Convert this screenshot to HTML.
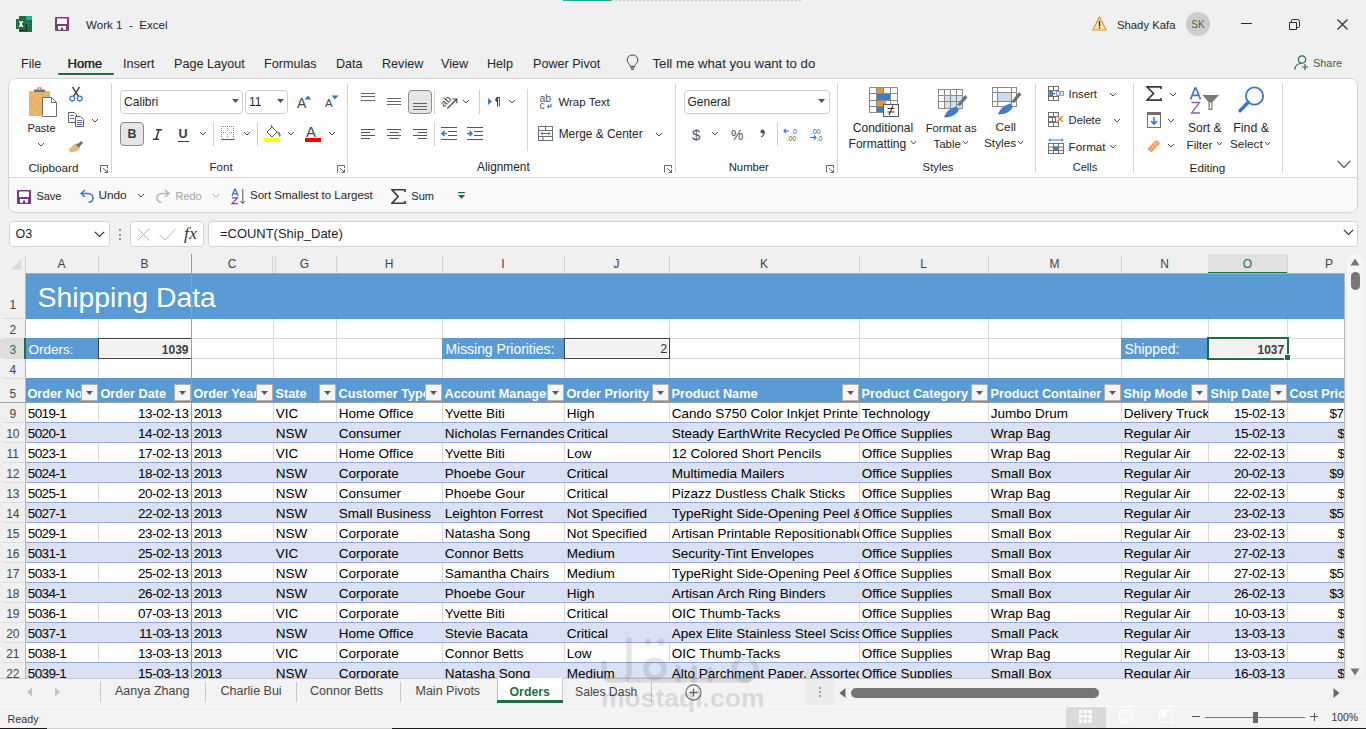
<!DOCTYPE html><html><head><meta charset="utf-8"><style>
html,body{margin:0;padding:0;}
body{width:1366px;height:729px;overflow:hidden;position:relative;background:#f0f0f0;font-family:"Liberation Sans",sans-serif;}
.a{position:absolute;}
.t{position:absolute;white-space:pre;line-height:1;}
.clip{position:absolute;overflow:hidden;}
</style></head><body>
<div class="a" style="left:563px;top:0px;width:48px;height:1px;background:#1aa99b"></div>
<div class="a" style="left:611px;top:0px;width:192px;height:1px;background:repeating-linear-gradient(90deg,#c8c8c8 0 2px,transparent 2px 4px)"></div>
<svg class="a" style="left:16px;top:16px;" width="16" height="16" viewBox="0 0 16 16"><rect x="3" y="0" width="13" height="16" fill="#1d7044"/><rect x="10" y="0" width="6" height="4" fill="#20b1a3"/><rect x="0" y="3" width="10" height="10" fill="#1d7044"/><path d="M2.6 5 L4.2 5 L5 6.6 L5.8 5 L7.4 5 L5.9 8 L7.4 11 L5.8 11 L5 9.4 L4.2 11 L2.6 11 L4.1 8 Z" fill="#fff"/><path d="M10.5 8 V14.5 H3.5" fill="none" stroke="#222" stroke-width="1"/><g fill="#20b1a3"><rect x="11" y="6" width="1" height="1"/><rect x="13" y="7" width="1" height="1"/><rect x="12" y="9" width="1" height="1"/></g></svg>
<svg class="a" style="left:55px;top:17px;" width="14" height="14" viewBox="0 0 14 14"><rect x="0" y="0" width="14" height="14" rx="1" fill="#7b3a80"/><rect x="2" y="1.5" width="10" height="5.5" fill="#fff"/><rect x="3" y="9" width="8" height="3.7" fill="#fff"/><rect x="6" y="10.5" width="2" height="3" fill="#7b3a80"/></svg>
<div class="t " style="left:86px;top:19.18px;font-size:11.6px;color:#262626;">Work 1  -  Excel</div>
<svg class="a" style="left:1092px;top:16px;" width="15" height="15" viewBox="0 0 15 15"><path d="M7.5 1 L14.2 14 H0.8 Z" fill="#fde7b8" stroke="#e0932a" stroke-width="1.2" stroke-linejoin="round"/><rect x="6.9" y="5" width="1.3" height="5.2" fill="#222"/><rect x="6.9" y="11.2" width="1.3" height="1.4" fill="#222"/></svg>
<div class="t " style="left:1117px;top:19.73px;font-size:11.3px;color:#262626;">Shady Kafa</div>
<div class="a" style="left:1186px;top:12px;width:24px;height:24px;border-radius:50%;background:#cdcdcd"></div>
<div class="t" style="left:1098px;width:200px;text-align:center;top:19.54px;font-size:10px;color:#5a5a5a;">SK</div>
<div class="a" style="left:1241px;top:23px;width:11px;height:1px;background:#2a2a2a"></div>
<svg class="a" style="left:1289px;top:19px;" width="11" height="11" viewBox="0 0 11 11"><path d="M0.5 3.5 H7.5 V10.5 H0.5 Z" fill="none" stroke="#2a2a2a" stroke-width="1"/><path d="M2.5 3.5 V1.5 Q2.5 0.5 3.5 0.5 H8.5 Q10.5 0.5 10.5 2.5 V7.5 Q10.5 8.5 9.5 8.5 H7.5" fill="none" stroke="#2a2a2a" stroke-width="1"/></svg>
<svg class="a" style="left:1337px;top:19px;" width="11" height="11" viewBox="0 0 11 11"><path d="M0.5 0.5 L10.5 10.5 M10.5 0.5 L0.5 10.5" stroke="#2a2a2a" stroke-width="1.1"/></svg>
<div class="t " style="left:21px;top:58.13px;font-size:12.6px;color:#262626;">File</div>
<div class="t " style="left:123px;top:58.13px;font-size:12.6px;color:#262626;">Insert</div>
<div class="t " style="left:174px;top:58.13px;font-size:12.6px;color:#262626;">Page Layout</div>
<div class="t " style="left:264px;top:58.13px;font-size:12.6px;color:#262626;">Formulas</div>
<div class="t " style="left:336px;top:58.13px;font-size:12.6px;color:#262626;">Data</div>
<div class="t " style="left:382px;top:58.13px;font-size:12.6px;color:#262626;">Review</div>
<div class="t " style="left:441px;top:58.13px;font-size:12.6px;color:#262626;">View</div>
<div class="t " style="left:487px;top:58.13px;font-size:12.6px;color:#262626;">Help</div>
<div class="t " style="left:533px;top:58.13px;font-size:12.6px;color:#262626;">Power Pivot</div>
<div class="t " style="left:67.5px;top:57.88px;font-size:12.9px;color:#262626;text-shadow:0.35px 0 0 #262626;">Home</div>
<div class="a" style="left:58px;top:73px;width:56px;height:2.4px;background:#1e6e42;border-radius:1px"></div>
<svg class="a" style="left:626px;top:54px;" width="13" height="16" viewBox="0 0 13 16"><path d="M6.5 1 C3.2 1 1.2 3.4 1.2 6 C1.2 8 2.4 9.2 3.4 10.3 C4 11 4.2 11.6 4.2 12.3 H8.8 C8.8 11.6 9 11 9.6 10.3 C10.6 9.2 11.8 8 11.8 6 C11.8 3.4 9.8 1 6.5 1 Z" fill="none" stroke="#444" stroke-width="1"/><path d="M4.4 13.8 H8.6 M5 15.3 H8" stroke="#444" stroke-width="1"/></svg>
<div class="t " style="left:652.5px;top:57.33px;font-size:13.2px;color:#262626;">Tell me what you want to do</div>
<svg class="a" style="left:1294px;top:55px;" width="15" height="15" viewBox="0 0 15 15"><circle cx="8" cy="4.5" r="3.7" fill="none" stroke="#1e6e42" stroke-width="1.2"/><path d="M0.8 14.5 C1.2 10.5 4 8.5 7.5 8.5" fill="none" stroke="#1e6e42" stroke-width="1.2"/><path d="M11 9 V15 M8 12 H14" stroke="#1e6e42" stroke-width="1.2"/></svg>
<div class="t " style="left:1313px;top:57.77px;font-size:10.9px;color:#1e6e42;">Share</div>
<div class="a" style="left:8px;top:78px;width:1348px;height:133px;border:1px solid #d5d5d5;border-radius:8px;background:#f9f9f9;overflow:hidden"><div class="a" style="left:0;top:0;width:1348px;height:98px;background:#fff;border-bottom:1px solid #d5d5d5"></div></div>
<svg class="a" style="left:29px;top:87px;" width="29" height="31" viewBox="0 0 29 31"><rect x="0" y="4" width="21" height="25" rx="1.5" fill="#e7b263"/>
<g fill="#f6d59d" opacity="0.9"><circle cx="3" cy="8" r="0.8"/><circle cx="7" cy="11" r="0.8"/><circle cx="4" cy="15" r="0.8"/><circle cx="8" cy="19" r="0.8"/><circle cx="3" cy="23" r="0.8"/><circle cx="7" cy="26" r="0.8"/><circle cx="11" cy="9" r="0.8"/><circle cx="16" cy="7" r="0.8"/></g>
<path d="M5 5 H16 V2.5 H12.5 V0.5 H8.5 V2.5 H5 Z" fill="#737373"/><rect x="9.5" y="1.3" width="2" height="1.4" fill="#fff"/>
<path d="M13.5 10.5 H22.5 L27.5 15.5 V29.5 H13.5 Z" fill="#fff" stroke="#6d6d6d" stroke-width="1"/><path d="M22.5 10.5 V15.5 H27.5" fill="none" stroke="#6d6d6d" stroke-width="1"/></svg>
<div class="t " style="left:27.4px;top:123.29px;font-size:11px;color:#262626;">Paste</div>
<svg class="a" style="left:37px;top:142px;" width="8" height="5" viewBox="0 0 8 5"><path d="M1 1 L4.0 4 L7 1" fill="none" stroke="#4a4a4a" stroke-width="1"/></svg>
<svg class="a" style="left:69px;top:86px;" width="15" height="16" viewBox="0 0 15 16"><path d="M3.5 1 L9.5 10.5 M10.5 1 L4.5 10.5" stroke="#505050" stroke-width="1.5"/><circle cx="3.3" cy="12.6" r="2.4" fill="none" stroke="#3b78c4" stroke-width="1.3"/><circle cx="10.7" cy="12.6" r="2.4" fill="none" stroke="#3b78c4" stroke-width="1.3"/></svg>
<svg class="a" style="left:68px;top:112px;" width="16" height="15" viewBox="0 0 16 15"><path d="M0.5 0.5 H6.5 L8.5 2.5 V10.5 H0.5 Z" fill="#fff" stroke="#606060"/><rect x="2" y="3" width="4" height="1" fill="#3b78c4"/><rect x="2" y="6" width="4" height="1" fill="#3b78c4"/><path d="M7.5 4.5 H12.5 L15.5 7.5 V14.5 H7.5 Z" fill="#fff" stroke="#606060"/><rect x="9" y="8" width="5" height="1" fill="#3b78c4"/><rect x="9" y="10" width="5" height="1" fill="#3b78c4"/><rect x="9" y="12" width="5" height="1" fill="#3b78c4"/></svg>
<svg class="a" style="left:91px;top:118px;" width="8" height="5" viewBox="0 0 8 5"><path d="M1 1 L4.0 4 L7 1" fill="none" stroke="#4a4a4a" stroke-width="1"/></svg>
<svg class="a" style="left:68px;top:139px;" width="16" height="14" viewBox="0 0 16 14"><path d="M9.5 5.5 L13 2 L15 4 L11.5 7.5 Z" fill="#6b6b6b"/><path d="M7 4.5 L12 9.5 L9.5 12 L3 13.5 L0.5 11 L2.5 9 Z" fill="#e3b67a"/><path d="M8.5 5 L11.5 8" stroke="#737373" stroke-width="2"/></svg>
<div class="t " style="left:28.4px;top:161.60px;font-size:11.7px;color:#262626;">Clipboard</div>
<svg class="a" style="left:100px;top:165px;" width="8" height="8" viewBox="0 0 8 8"><path d="M0.5 7.5 V0.5 H7.5 V3" fill="none" stroke="#666" stroke-width="1"/><path d="M3 3 L7.5 7.5 M7.5 4.5 V7.5 H4.5" fill="none" stroke="#666" stroke-width="1"/></svg>
<div class="a" style="left:111px;top:83px;width:1px;height:90px;background:#d6d6d6"></div>
<div class="a" style="left:120px;top:90px;width:121px;height:22px;border:1px solid #cfcfcf;border-radius:4px;background:#fff"></div>
<div class="t " style="left:124px;top:95.76px;font-size:12.1px;color:#1f1f1f;">Calibri</div>
<svg class="a" style="left:232px;top:99px;" width="7" height="4" viewBox="0 0 7 4"><path d="M0 0 H7 L3.5 4 Z" fill="#555"/></svg>
<div class="a" style="left:245px;top:90px;width:41px;height:22px;border:1px solid #cfcfcf;border-radius:4px;background:#fff"></div>
<div class="t " style="left:249px;top:95.76px;font-size:12.1px;color:#1f1f1f;">11</div>
<svg class="a" style="left:277px;top:99px;" width="7" height="4" viewBox="0 0 7 4"><path d="M0 0 H7 L3.5 4 Z" fill="#555"/></svg>
<div class="t " style="left:297px;top:96.15px;font-size:14px;color:#444;">A</div>
<svg class="a" style="left:304px;top:95px;" width="8" height="5" viewBox="0 0 8 5"><path d="M0.5 4.5 L4 0.5 L7.5 4.5 Z" fill="#3b78c4"/></svg>
<div class="t " style="left:325px;top:98.27px;font-size:11.5px;color:#444;">A</div>
<svg class="a" style="left:331px;top:95px;" width="8" height="5" viewBox="0 0 8 5"><path d="M0.5 0.5 H7.5 L4 4.5 Z" fill="#3b78c4"/></svg>
<div class="a" style="left:120px;top:122px;width:22px;height:22px;border:1px solid #8c8c8c;border-radius:4px;background:#e6e6e6"></div>
<div class="t " style="left:127.5px;top:127.92px;font-size:12.5px;color:#3a3a3a;font-weight:700;">B</div>
<svg class="a" style="left:152px;top:129px;" width="11" height="11" viewBox="0 0 11 11"><path d="M4 0.8 H10 M1 10.2 H7 M7 0.8 L4 10.2" stroke="#3a3a3a" stroke-width="1.5" fill="none"/></svg>
<div class="t " style="left:178.5px;top:127.92px;font-size:12.5px;color:#3a3a3a;font-weight:700;">U</div>
<div class="a" style="left:178px;top:141px;width:11px;height:1px;background:#3a3a3a"></div>
<svg class="a" style="left:199px;top:131px;" width="8" height="5" viewBox="0 0 8 5"><path d="M1 1 L4.0 4 L7 1" fill="none" stroke="#4a4a4a" stroke-width="1"/></svg>
<div class="a" style="left:213px;top:122px;width:1px;height:24px;background:#d0d0d0"></div>
<svg class="a" style="left:221px;top:126px;" width="14" height="15" viewBox="0 0 14 15"><g fill="#8a8a8a"><rect x="0" y="0" width="1" height="1"/><rect x="2" y="0" width="1" height="1"/><rect x="4" y="0" width="1" height="1"/><rect x="6" y="0" width="1" height="1"/><rect x="8" y="0" width="1" height="1"/><rect x="10" y="0" width="1" height="1"/><rect x="12" y="0" width="1" height="1"/><rect x="0" y="6" width="1" height="1"/><rect x="2" y="6" width="1" height="1"/><rect x="4" y="6" width="1" height="1"/><rect x="8" y="6" width="1" height="1"/><rect x="10" y="6" width="1" height="1"/><rect x="12" y="6" width="1" height="1"/><rect x="0" y="2" width="1" height="1"/><rect x="0" y="4" width="1" height="1"/><rect x="0" y="8" width="1" height="1"/><rect x="0" y="10" width="1" height="1"/><rect x="12" y="2" width="1" height="1"/><rect x="12" y="4" width="1" height="1"/><rect x="12" y="8" width="1" height="1"/><rect x="12" y="10" width="1" height="1"/><rect x="6" y="2" width="1" height="1"/><rect x="6" y="4" width="1" height="1"/><rect x="6" y="8" width="1" height="1"/><rect x="6" y="10" width="1" height="1"/></g><rect x="0" y="13" width="14" height="1" fill="#555"/></svg>
<svg class="a" style="left:243px;top:131px;" width="8" height="5" viewBox="0 0 8 5"><path d="M1 1 L4.0 4 L7 1" fill="none" stroke="#4a4a4a" stroke-width="1"/></svg>
<div class="a" style="left:257px;top:122px;width:1px;height:24px;background:#d0d0d0"></div>
<svg class="a" style="left:264px;top:124px;" width="17" height="18" viewBox="0 0 17 18"><path d="M3 8 L8 3 L13 8 L8 13 Z" fill="#fff" stroke="#555" stroke-width="1"/><path d="M7.5 1 L8 3" stroke="#555"/><path d="M13.5 8 C15.5 9 16 11 15.5 12.5" fill="none" stroke="#3b78c4" stroke-width="1.6"/><rect x="0" y="14" width="16" height="4" fill="#ffff00"/></svg>
<svg class="a" style="left:287px;top:131px;" width="8" height="5" viewBox="0 0 8 5"><path d="M1 1 L4.0 4 L7 1" fill="none" stroke="#4a4a4a" stroke-width="1"/></svg>
<div class="t " style="left:306px;top:124.30px;font-size:15px;color:#444;">A</div>
<div class="a" style="left:305px;top:138px;width:16px;height:4px;background:#ff0000"></div>
<svg class="a" style="left:328px;top:131px;" width="8" height="5" viewBox="0 0 8 5"><path d="M1 1 L4.0 4 L7 1" fill="none" stroke="#4a4a4a" stroke-width="1"/></svg>
<div class="t " style="left:209.6px;top:161.97px;font-size:11.5px;color:#262626;">Font</div>
<svg class="a" style="left:337px;top:165px;" width="8" height="8" viewBox="0 0 8 8"><path d="M0.5 7.5 V0.5 H7.5 V3" fill="none" stroke="#666" stroke-width="1"/><path d="M3 3 L7.5 7.5 M7.5 4.5 V7.5 H4.5" fill="none" stroke="#666" stroke-width="1"/></svg>
<div class="a" style="left:347px;top:83px;width:1px;height:90px;background:#d6d6d6"></div>
<svg class="a" style="left:361px;top:93px;" width="14" height="9" viewBox="0 0 14 9"><rect x="0" y="0" width="14" height="1" fill="#666"/><rect x="0" y="3" width="14" height="1" fill="#666"/><rect x="0" y="7" width="14" height="1" fill="#666"/></svg>
<svg class="a" style="left:387px;top:97px;" width="14" height="9" viewBox="0 0 14 9"><rect x="0" y="1" width="14" height="1" fill="#666"/><rect x="0" y="4" width="14" height="1" fill="#666"/><rect x="0" y="7" width="14" height="1" fill="#666"/></svg>
<div class="a" style="left:408px;top:90px;width:22px;height:22px;border:1px solid #8c8c8c;border-radius:4px;background:#e6e6e6"></div>
<svg class="a" style="left:413px;top:102px;" width="14" height="9" viewBox="0 0 14 9"><rect x="0" y="1" width="14" height="1" fill="#666"/><rect x="0" y="4" width="14" height="1" fill="#666"/><rect x="0" y="7" width="14" height="1" fill="#666"/></svg>
<div class="a" style="left:434px;top:90px;width:1px;height:24px;background:#d0d0d0"></div>
<svg class="a" style="left:439px;top:91px;" width="20" height="20" viewBox="0 0 20 20"><text x="5" y="16.5" transform="rotate(-45 5 16.5)" font-family="Liberation Sans" font-size="10" fill="#444">ab</text><path d="M8.3 17.5 L17.8 8" stroke="#444" stroke-width="1.1"/><path d="M13.5 8 H17.8 V12.3" fill="none" stroke="#444" stroke-width="1.1"/></svg>
<svg class="a" style="left:462px;top:99px;" width="8" height="5" viewBox="0 0 8 5"><path d="M1 1 L4.0 4 L7 1" fill="none" stroke="#4a4a4a" stroke-width="1"/></svg>
<div class="a" style="left:479px;top:90px;width:1px;height:24px;background:#d0d0d0"></div>
<svg class="a" style="left:487px;top:97px;" width="14" height="10" viewBox="0 0 14 10"><path d="M1 1 L5 4.5 L1 8 Z" fill="#3b78c4"/><path d="M9.5 0.5 H13 M10.5 0.5 V9.5 M12.3 0.5 V9.5" stroke="#444" stroke-width="1"/><path d="M10.5 0.5 A2.3 2.3 0 0 0 10.5 5.1 Z" fill="#444"/></svg>
<svg class="a" style="left:508px;top:99px;" width="8" height="5" viewBox="0 0 8 5"><path d="M1 1 L4.0 4 L7 1" fill="none" stroke="#4a4a4a" stroke-width="1"/></svg>
<svg class="a" style="left:361px;top:129px;" width="14" height="10" viewBox="0 0 14 10"><rect x="0" y="0" width="14" height="1" fill="#555"/><rect x="0" y="3" width="9" height="1" fill="#555"/><rect x="0" y="6" width="14" height="1" fill="#555"/><rect x="0" y="9" width="9" height="1" fill="#555"/></svg>
<svg class="a" style="left:387px;top:129px;" width="14" height="10" viewBox="0 0 14 10"><rect x="0.0" y="0" width="14" height="1" fill="#555"/><rect x="2.5" y="3" width="9" height="1" fill="#555"/><rect x="0.0" y="6" width="14" height="1" fill="#555"/><rect x="2.5" y="9" width="9" height="1" fill="#555"/></svg>
<svg class="a" style="left:413px;top:129px;" width="14" height="10" viewBox="0 0 14 10"><rect x="0" y="0" width="14" height="1" fill="#555"/><rect x="5" y="3" width="9" height="1" fill="#555"/><rect x="0" y="6" width="14" height="1" fill="#555"/><rect x="5" y="9" width="9" height="1" fill="#555"/></svg>
<div class="a" style="left:434px;top:122px;width:1px;height:24px;background:#d0d0d0"></div>
<svg class="a" style="left:441px;top:127px;" width="16" height="13" viewBox="0 0 16 13"><rect x="0" y="0" width="16" height="1" fill="#555"/><rect x="7" y="4" width="9" height="1" fill="#555"/><rect x="7" y="8" width="9" height="1" fill="#555"/><rect x="0" y="12" width="16" height="1" fill="#555"/><path d="M6 6.5 H1 M3.5 4 L1 6.5 L3.5 9" fill="none" stroke="#3b78c4" stroke-width="1.5"/></svg>
<svg class="a" style="left:467px;top:127px;" width="16" height="13" viewBox="0 0 16 13"><rect x="0" y="0" width="16" height="1" fill="#555"/><rect x="7" y="4" width="9" height="1" fill="#555"/><rect x="7" y="8" width="9" height="1" fill="#555"/><rect x="0" y="12" width="16" height="1" fill="#555"/><path d="M0 6.5 H5 M2.5 4 L5 6.5 L2.5 9" fill="none" stroke="#3b78c4" stroke-width="1.5"/></svg>
<div class="a" style="left:527px;top:89px;width:1px;height:62px;background:#d6d6d6"></div>
<svg class="a" style="left:539px;top:93px;" width="15" height="17" viewBox="0 0 15 17"><text x="0.5" y="9" font-family="Liberation Sans" font-size="10.5" fill="#555">ab</text><text x="0.5" y="16" font-family="Liberation Sans" font-size="10.5" fill="#555">c</text><path d="M12 11 V13.5 H8.5 M10 12 L8.5 13.5 L10 15" fill="none" stroke="#3b78c4" stroke-width="1.1"/></svg>
<div class="t " style="left:558.4px;top:96.97px;font-size:11.5px;color:#262626;">Wrap Text</div>
<svg class="a" style="left:538px;top:126px;" width="15" height="15" viewBox="0 0 15 15"><rect x="0.5" y="0.5" width="14" height="14" fill="#fff" stroke="#6d6d6d"/><path d="M0.5 4.5 H14.5 M0.5 10.5 H14.5 M7.5 0.5 V4.5 M5 10.5 V14.5" stroke="#6d6d6d"/><path d="M3 7.5 H12 M4.5 6 L3 7.5 L4.5 9 M10.5 6 L12 7.5 L10.5 9" fill="none" stroke="#3b78c4"/></svg>
<div class="t " style="left:558.7px;top:128.93px;font-size:11.9px;color:#262626;">Merge &amp; Center</div>
<svg class="a" style="left:655px;top:132px;" width="8" height="5" viewBox="0 0 8 5"><path d="M1 1 L4.0 4 L7 1" fill="none" stroke="#4a4a4a" stroke-width="1"/></svg>
<div class="t " style="left:477px;top:161.67px;font-size:11.85px;color:#262626;">Alignment</div>
<svg class="a" style="left:664px;top:165px;" width="8" height="8" viewBox="0 0 8 8"><path d="M0.5 7.5 V0.5 H7.5 V3" fill="none" stroke="#666" stroke-width="1"/><path d="M3 3 L7.5 7.5 M7.5 4.5 V7.5 H4.5" fill="none" stroke="#666" stroke-width="1"/></svg>
<div class="a" style="left:675px;top:83px;width:1px;height:90px;background:#d6d6d6"></div>
<div class="a" style="left:684px;top:90px;width:144px;height:22px;border:1px solid #cfcfcf;border-radius:4px;background:#fff"></div>
<div class="t " style="left:687.5px;top:95.64px;font-size:12px;color:#1f1f1f;">General</div>
<svg class="a" style="left:818px;top:99px;" width="7" height="4" viewBox="0 0 7 4"><path d="M0 0 H7 L3.5 4 Z" fill="#555"/></svg>
<div class="t " style="left:692px;top:126.80px;font-size:15px;color:#555;">$</div>
<svg class="a" style="left:711px;top:131px;" width="8" height="5" viewBox="0 0 8 5"><path d="M1 1 L4.0 4 L7 1" fill="none" stroke="#4a4a4a" stroke-width="1"/></svg>
<div class="t " style="left:731px;top:127.65px;font-size:14px;color:#555;">%</div>
<svg class="a" style="left:759px;top:129px;" width="7" height="9" viewBox="0 0 7 9"><circle cx="3.5" cy="2.6" r="2.1" fill="#555"/><path d="M5.3 2.8 Q5.4 6.2 2.2 8" stroke="#555" stroke-width="1.3" fill="none"/></svg>
<div class="a" style="left:777px;top:122px;width:1px;height:24px;background:#d0d0d0"></div>
<svg class="a" style="left:783px;top:127px;" width="16" height="14" viewBox="0 0 16 14"><path d="M1 4 H6 M3 2 L1 4 L3 6" fill="none" stroke="#3b78c4" stroke-width="1.2"/><text x="8" y="7" font-family="Liberation Sans" font-size="7" fill="#555">.0</text><text x="3.5" y="13.5" font-family="Liberation Sans" font-size="7" fill="#555">.00</text></svg>
<svg class="a" style="left:810px;top:127px;" width="16" height="14" viewBox="0 0 16 14"><text x="1" y="7" font-family="Liberation Sans" font-size="7" fill="#555">.00</text><path d="M0 10.5 H6 M4 8.5 L6 10.5 L4 12.5" fill="none" stroke="#3b78c4" stroke-width="1.2"/><text x="6.5" y="13.5" font-family="Liberation Sans" font-size="7" fill="#555">.0</text></svg>
<div class="t " style="left:728.7px;top:162.03px;font-size:11.3px;color:#262626;">Number</div>
<svg class="a" style="left:826px;top:165px;" width="8" height="8" viewBox="0 0 8 8"><path d="M0.5 7.5 V0.5 H7.5 V3" fill="none" stroke="#666" stroke-width="1"/><path d="M3 3 L7.5 7.5 M7.5 4.5 V7.5 H4.5" fill="none" stroke="#666" stroke-width="1"/></svg>
<div class="a" style="left:837px;top:83px;width:1px;height:90px;background:#d6d6d6"></div>
<svg class="a" style="left:869px;top:87px;" width="31" height="31" viewBox="0 0 31 31"><g stroke="#8a8a8a" fill="none" stroke-width="1"><path d="M0.5 0.5 H28.5 V20 M0.5 0.5 V25.5 H14 M0.5 6.5 H28.5 M0.5 13.5 H28.5 M0.5 19.5 H14 M7.5 0.5 V25.5 M14.5 0.5 V25.5 M21.5 0.5 V20"/></g>
<rect x="8" y="1" width="6" height="5" fill="#e0963e"/><rect x="8" y="7" width="13" height="6" fill="#3d7fc6"/><rect x="8" y="14" width="9" height="5" fill="#e0963e"/><rect x="8" y="20" width="6" height="5" fill="#3d7fc6"/>
<rect x="14.5" y="17.5" width="15" height="12" fill="#fff" stroke="#555"/><path d="M18.5 21.5 H25.5 M18.5 25 H25.5 M24 18.5 L20 28" stroke="#333" stroke-width="1.1" fill="none"/></svg>
<div class="t " style="left:852.7px;top:122.06px;font-size:12.1px;color:#262626;">Conditional</div>
<div class="t " style="left:848.5px;top:138.16px;font-size:12.1px;color:#262626;">Formatting</div>
<svg class="a" style="left:910px;top:140px;" width="7" height="5" viewBox="0 0 7 5"><path d="M1 1 L3.5 4 L6 1" fill="none" stroke="#4a4a4a" stroke-width="1"/></svg>
<svg class="a" style="left:938px;top:89px;" width="30" height="29" viewBox="0 0 30 29"><rect x="0.5" y="0.5" width="24" height="19" fill="#fff" stroke="#8a8a8a"/><rect x="7" y="6" width="17" height="13" fill="#cfe1f2"/><g stroke="#8a8a8a"><path d="M0.5 6.5 H24.5 M0.5 12.5 H24.5 M6.5 0.5 V19.5 M12.5 0.5 V19.5 M18.5 0.5 V19.5"/></g>
<path d="M19 16 L27 6 L29.5 8.5 L22 17 Z" fill="#707070"/><path d="M6 28.5 C8 22 13 19 18 17.5 L21 20.5 C19 25 14 28.5 6 28.5 Z" fill="#3d7fc6"/></svg>
<div class="t " style="left:925.7px;top:122.73px;font-size:11.3px;color:#262626;">Format as</div>
<div class="t " style="left:933.4px;top:138.67px;font-size:11.5px;color:#262626;">Table</div>
<svg class="a" style="left:962px;top:140px;" width="7" height="5" viewBox="0 0 7 5"><path d="M1 1 L3.5 4 L6 1" fill="none" stroke="#4a4a4a" stroke-width="1"/></svg>
<svg class="a" style="left:992px;top:87px;" width="30" height="29" viewBox="0 0 30 29"><rect x="0.5" y="0.5" width="24" height="19" fill="#fff" stroke="#8a8a8a"/><g stroke="#8a8a8a"><path d="M0.5 5.5 H24.5 M0.5 14.5 H24.5 M5.5 0.5 V19.5 M19.5 0.5 V19.5"/></g><rect x="6" y="6" width="13" height="8" fill="#c7dcf0"/>
<path d="M19 15 L27 5 L29.5 7.5 L22 16 Z" fill="#707070"/><path d="M6 27.5 C8 21 13 18 18 16.5 L21 19.5 C19 24 14 27.5 6 27.5 Z" fill="#3d7fc6"/></svg>
<div class="t " style="left:995.6px;top:122.31px;font-size:11.8px;color:#262626;">Cell</div>
<div class="t " style="left:984px;top:138.41px;font-size:11.8px;color:#262626;">Styles</div>
<svg class="a" style="left:1017px;top:140px;" width="7" height="5" viewBox="0 0 7 5"><path d="M1 1 L3.5 4 L6 1" fill="none" stroke="#4a4a4a" stroke-width="1"/></svg>
<div class="t " style="left:922.6px;top:162.23px;font-size:11.3px;color:#262626;">Styles</div>
<div class="a" style="left:1035px;top:83px;width:1px;height:90px;background:#d6d6d6"></div>
<svg class="a" style="left:1048px;top:86px;" width="16" height="16" viewBox="0 0 16 16"><g fill="#fff" stroke="#707070"><rect x="0.5" y="0.5" width="5" height="4"/><rect x="5.5" y="0.5" width="5" height="4"/><rect x="0.5" y="10.5" width="5" height="4"/><rect x="5.5" y="10.5" width="5" height="4"/><rect x="0.5" y="5.5" width="4" height="4"/></g><g fill="#dde8f4" stroke="#8aa"><rect x="8.5" y="5.5" width="3.5" height="4"/><rect x="12" y="5.5" width="3.5" height="4"/></g><path d="M7 7.5 H1.5 M3.5 5.5 L1.5 7.5 L3.5 9.5" fill="none" stroke="#3b78c4" stroke-width="1.3"/></svg>
<div class="t " style="left:1068.6px;top:88.93px;font-size:11.3px;color:#262626;">Insert</div>
<svg class="a" style="left:1109px;top:92px;" width="8" height="5" viewBox="0 0 8 5"><path d="M1 1 L4.0 4 L7 1" fill="none" stroke="#4a4a4a" stroke-width="1"/></svg>
<svg class="a" style="left:1048px;top:112px;" width="16" height="16" viewBox="0 0 16 16"><g fill="#fff" stroke="#707070"><rect x="0.5" y="0.5" width="5" height="4"/><rect x="5.5" y="0.5" width="5" height="4"/><rect x="0.5" y="10.5" width="5" height="4"/><rect x="5.5" y="10.5" width="5" height="4"/><rect x="0.5" y="5.5" width="4" height="4"/><rect x="4.5" y="5.5" width="3" height="4"/></g><path d="M9 4 L15 10 M15 4 L9 10" stroke="#e0822a" stroke-width="1.4"/></svg>
<div class="t " style="left:1068.6px;top:115.12px;font-size:11.2px;color:#262626;">Delete</div>
<svg class="a" style="left:1113px;top:118px;" width="8" height="5" viewBox="0 0 8 5"><path d="M1 1 L4.0 4 L7 1" fill="none" stroke="#4a4a4a" stroke-width="1"/></svg>
<svg class="a" style="left:1048px;top:138px;" width="16" height="16" viewBox="0 0 16 16"><path d="M0.5 2 H15.5 M2 0.5 V3.5 M14 0.5 V3.5" stroke="#3b78c4"/><g fill="#fff" stroke="#707070"><rect x="0.5" y="5.5" width="15" height="10"/></g><path d="M0.5 9 H15.5 M0.5 12.5 H15.5 M5.5 5.5 V15.5 M10.5 5.5 V15.5" stroke="#707070"/><rect x="5" y="8.5" width="5" height="4" fill="#3b78c4"/></svg>
<div class="t " style="left:1068.6px;top:140.70px;font-size:11.7px;color:#262626;">Format</div>
<svg class="a" style="left:1109px;top:144px;" width="8" height="5" viewBox="0 0 8 5"><path d="M1 1 L4.0 4 L7 1" fill="none" stroke="#4a4a4a" stroke-width="1"/></svg>
<div class="t " style="left:1072.7px;top:162.20px;font-size:11.1px;color:#262626;">Cells</div>
<div class="a" style="left:1133px;top:83px;width:1px;height:90px;background:#d6d6d6"></div>
<svg class="a" style="left:1146px;top:86px;" width="16" height="15" viewBox="0 0 16 15"><path d="M15 3 V0.8 H1 L7.5 7.5 L1 14.2 H15 V12" fill="none" stroke="#3a3a3a" stroke-width="1.7" stroke-linejoin="miter"/></svg>
<svg class="a" style="left:1169px;top:92px;" width="8" height="5" viewBox="0 0 8 5"><path d="M1 1 L4.0 4 L7 1" fill="none" stroke="#4a4a4a" stroke-width="1"/></svg>
<svg class="a" style="left:1147px;top:112px;" width="14" height="16" viewBox="0 0 14 16"><rect x="0.5" y="0.5" width="13" height="15" fill="#fff" stroke="#707070"/><rect x="0.5" y="0.5" width="13" height="2.5" fill="#707070"/><path d="M7 5 V12 M4 9 L7 12 L10 9" fill="none" stroke="#3b78c4" stroke-width="1.6"/></svg>
<svg class="a" style="left:1167px;top:118px;" width="8" height="5" viewBox="0 0 8 5"><path d="M1 1 L4.0 4 L7 1" fill="none" stroke="#4a4a4a" stroke-width="1"/></svg>
<svg class="a" style="left:1147px;top:138px;" width="14" height="14" viewBox="0 0 14 14"><path d="M1 10 L8 3 Q9.5 1.5 11 3 L12 4 Q13.5 5.5 12 7 L5 14 Q4 14.5 3 13.5 L1 11.5 Q0.5 10.5 1 10 Z" fill="#e8a46a"/><g fill="#fff" opacity="0.6"><circle cx="7" cy="6" r="0.7"/><circle cx="9" cy="8" r="0.7"/><circle cx="6" cy="9" r="0.7"/><circle cx="9" cy="5" r="0.7"/></g></svg>
<svg class="a" style="left:1167px;top:143px;" width="8" height="5" viewBox="0 0 8 5"><path d="M1 1 L4.0 4 L7 1" fill="none" stroke="#4a4a4a" stroke-width="1"/></svg>
<svg class="a" style="left:1189px;top:87px;" width="32" height="28" viewBox="0 0 32 28"><path d="M1.5 12.5 L6 1 H7 L11.5 12.5 M3.3 8.3 H9.7" fill="none" stroke="#3b78c4" stroke-width="1.7"/><path d="M2.5 15.5 H10.5 L2.5 26 H11" fill="none" stroke="#8b5fb8" stroke-width="1.3"/><path d="M13.5 8 H30 L23.5 15 V23 H19.5 V15 Z" fill="#7a7a7a"/><rect x="20.8" y="15.5" width="1.6" height="6.2" fill="#fff"/></svg>
<div class="t " style="left:1187.9px;top:122.36px;font-size:12.1px;color:#262626;">Sort &amp;</div>
<div class="t " style="left:1186.6px;top:139.18px;font-size:11.6px;color:#262626;">Filter</div>
<svg class="a" style="left:1216px;top:141px;" width="7" height="5" viewBox="0 0 7 5"><path d="M1 1 L3.5 4 L6 1" fill="none" stroke="#4a4a4a" stroke-width="1"/></svg>
<svg class="a" style="left:1237px;top:85px;" width="28" height="30" viewBox="0 0 28 30"><circle cx="17.5" cy="11" r="8.6" fill="none" stroke="#3b78c4" stroke-width="1.9"/><path d="M11.3 17.3 L3 25.8" stroke="#3b78c4" stroke-width="3.4" stroke-linecap="round"/></svg>
<div class="t " style="left:1233.3px;top:122.15px;font-size:12.35px;color:#262626;">Find &amp;</div>
<div class="t " style="left:1230px;top:139.01px;font-size:11.8px;color:#262626;">Select</div>
<svg class="a" style="left:1264px;top:141px;" width="7" height="5" viewBox="0 0 7 5"><path d="M1 1 L3.5 4 L6 1" fill="none" stroke="#4a4a4a" stroke-width="1"/></svg>
<div class="t " style="left:1189.6px;top:161.60px;font-size:11.7px;color:#262626;">Editing</div>
<div class="a" style="left:1282px;top:83px;width:1px;height:90px;background:#d6d6d6"></div>
<svg class="a" style="left:1337px;top:160px;" width="14" height="9" viewBox="0 0 14 9"><path d="M0.5 0.8 L7 7.5 L13.5 0.8" fill="none" stroke="#444" stroke-width="1.1"/></svg>
<svg class="a" style="left:17px;top:190px;" width="14" height="14" viewBox="0 0 14 14"><rect x="0" y="0" width="14" height="14" rx="1" fill="#7b3a80"/><rect x="2" y="1.5" width="10" height="5.5" fill="#fff"/><rect x="3" y="9" width="8" height="3.7" fill="#fff"/><rect x="6" y="10.5" width="2" height="3" fill="#7b3a80"/></svg>
<div class="t " style="left:36.4px;top:190.89px;font-size:11px;color:#262626;">Save</div>
<svg class="a" style="left:79px;top:189px;" width="15" height="14" viewBox="0 0 15 14"><path d="M3 4.5 H9 C12 4.5 14 6.5 14 9 C14 11.5 12 13.2 9.5 13.2" fill="none" stroke="#3b78c4" stroke-width="1.6"/><path d="M6 1 L2.2 4.5 L6 8" fill="none" stroke="#3b78c4" stroke-width="1.6"/></svg>
<div class="t " style="left:98.4px;top:190.21px;font-size:11.8px;color:#262626;">Undo</div>
<svg class="a" style="left:137px;top:193px;" width="8" height="5" viewBox="0 0 8 5"><path d="M1 1 L4.0 4 L7 1" fill="none" stroke="#4a4a4a" stroke-width="1"/></svg>
<svg class="a" style="left:156px;top:189px;" width="15" height="14" viewBox="0 0 15 14"><path d="M12 4.5 H6 C3 4.5 1 6.5 1 9 C1 11.5 3 13.2 5.5 13.2" fill="none" stroke="#b4b4b4" stroke-width="1.6"/><path d="M9 1 L12.8 4.5 L9 8" fill="none" stroke="#b4b4b4" stroke-width="1.6"/></svg>
<div class="t " style="left:175.4px;top:190.89px;font-size:11px;color:#a6a6a6;">Redo</div>
<svg class="a" style="left:212px;top:193px;" width="8" height="5" viewBox="0 0 8 5"><path d="M1 1 L4.0 4 L7 1" fill="none" stroke="#b4b4b4" stroke-width="1"/></svg>
<svg class="a" style="left:231px;top:188px;" width="16" height="17" viewBox="0 0 16 17"><path d="M1 8 L3.7 1.2 H4.3 L7 8 M2.2 5.6 H5.8" fill="none" stroke="#3b78c4" stroke-width="1.3"/><path d="M1 9.8 H6.5 L1 15.6 H6.8" fill="none" stroke="#8b3f8f" stroke-width="1.2"/><path d="M11.8 1 V15.5 M9.3 13 L11.8 15.5 L14.3 13" fill="none" stroke="#555" stroke-width="1"/></svg>
<div class="t " style="left:250px;top:190.37px;font-size:11.5px;color:#262626;">Sort Smallest to Largest</div>
<svg class="a" style="left:391px;top:189px;" width="15" height="15" viewBox="0 0 15 15"><path d="M14 3 V0.8 H1 L7.2 7.5 L1 14.2 H14 V12" fill="none" stroke="#3a3a3a" stroke-width="1.6"/></svg>
<div class="t " style="left:411.3px;top:190.79px;font-size:11px;color:#262626;">Sum</div>
<svg class="a" style="left:458px;top:192px;" width="7" height="8" viewBox="0 0 7 8"><rect x="0" y="0" width="7" height="1.2" fill="#1e6e42"/><path d="M0 3 H7 L3.5 7 Z" fill="#1e6e42"/></svg>
<div class="a" style="left:9px;top:221px;width:99px;height:24px;border:1px solid #d4d4d4;border-radius:4px;background:#fff"></div>
<div class="t " style="left:15.5px;top:227.92px;font-size:12.5px;color:#1f1f1f;">O3</div>
<svg class="a" style="left:94px;top:231px;" width="11" height="7" viewBox="0 0 11 7"><path d="M0.8 0.8 L5.5 5.5 L10.2 0.8" fill="none" stroke="#333" stroke-width="1.2"/></svg>
<div class="a" style="left:119px;top:229px;width:2px;height:2px;border-radius:1px;background:#777"></div>
<div class="a" style="left:119px;top:233.5px;width:2px;height:2px;border-radius:1px;background:#777"></div>
<div class="a" style="left:119px;top:238px;width:2px;height:2px;border-radius:1px;background:#777"></div>
<div class="a" style="left:130px;top:221px;width:72px;height:24px;border:1px solid #d4d4d4;border-radius:4px;background:#fff"></div>
<svg class="a" style="left:137px;top:228px;" width="13" height="13" viewBox="0 0 13 13"><path d="M0.5 0.5 L12.5 12.5 M12.5 0.5 L0.5 12.5" stroke="#b8b8b8" stroke-width="1"/></svg>
<svg class="a" style="left:159px;top:228px;" width="17" height="13" viewBox="0 0 17 13"><path d="M0.5 6.5 L6 12 L16.5 0.8" fill="none" stroke="#b8b8b8" stroke-width="1"/></svg>
<div class="t " style="left:184px;top:224.69px;font-size:17.5px;color:#333;font-family:'Liberation Serif',serif;font-style:italic;letter-spacing:0.3px;">fx</div>
<div class="a" style="left:208px;top:221px;width:1148px;height:24px;border:1px solid #d4d4d4;border-radius:4px;background:#fff"></div>
<div class="t " style="left:220px;top:227.83px;font-size:12.96px;color:#1f1f1f;">=COUNT(Ship_Date)</div>
<svg class="a" style="left:1343px;top:229px;" width="11" height="7" viewBox="0 0 11 7"><path d="M0.8 0.8 L5.5 5.5 L10.2 0.8" fill="none" stroke="#333" stroke-width="1.2"/></svg>
<div class="a" style="left:26px;top:274px;width:1319px;height:404px;background:#fff"></div>
<div class="a" style="left:0px;top:250px;width:1345px;height:24px;background:#f0f0f0"></div>
<svg class="a" style="left:10px;top:258px;" width="12" height="12" viewBox="0 0 12 12"><path d="M11.5 0.5 V11.5 H0.5 Z" fill="#dcdcdc"/></svg>
<div class="a" style="left:98px;top:256px;width:1px;height:17px;background:#d2d2d2"></div>
<div class="t" style="left:-38.5px;width:200px;text-align:center;top:257.54px;font-size:12px;color:#444;">A</div>
<div class="a" style="left:191px;top:256px;width:1px;height:17px;background:#d2d2d2"></div>
<div class="t" style="left:44.5px;width:200px;text-align:center;top:257.54px;font-size:12px;color:#444;">B</div>
<div class="t" style="left:132.0px;width:200px;text-align:center;top:257.54px;font-size:12px;color:#444;">C</div>
<div class="a" style="left:336px;top:256px;width:1px;height:17px;background:#d2d2d2"></div>
<div class="t" style="left:204.5px;width:200px;text-align:center;top:257.54px;font-size:12px;color:#444;">G</div>
<div class="a" style="left:442px;top:256px;width:1px;height:17px;background:#d2d2d2"></div>
<div class="t" style="left:289.0px;width:200px;text-align:center;top:257.54px;font-size:12px;color:#444;">H</div>
<div class="a" style="left:564px;top:256px;width:1px;height:17px;background:#d2d2d2"></div>
<div class="t" style="left:403.0px;width:200px;text-align:center;top:257.54px;font-size:12px;color:#444;">I</div>
<div class="a" style="left:669px;top:256px;width:1px;height:17px;background:#d2d2d2"></div>
<div class="t" style="left:516.5px;width:200px;text-align:center;top:257.54px;font-size:12px;color:#444;">J</div>
<div class="a" style="left:859px;top:256px;width:1px;height:17px;background:#d2d2d2"></div>
<div class="t" style="left:664.0px;width:200px;text-align:center;top:257.54px;font-size:12px;color:#444;">K</div>
<div class="a" style="left:988px;top:256px;width:1px;height:17px;background:#d2d2d2"></div>
<div class="t" style="left:823.5px;width:200px;text-align:center;top:257.54px;font-size:12px;color:#444;">L</div>
<div class="a" style="left:1121px;top:256px;width:1px;height:17px;background:#d2d2d2"></div>
<div class="t" style="left:954.5px;width:200px;text-align:center;top:257.54px;font-size:12px;color:#444;">M</div>
<div class="a" style="left:1208px;top:256px;width:1px;height:17px;background:#d2d2d2"></div>
<div class="t" style="left:1064.5px;width:200px;text-align:center;top:257.54px;font-size:12px;color:#444;">N</div>
<div class="a" style="left:1208px;top:254px;width:80px;height:18px;background:#e1e1e1"></div>
<div class="a" style="left:1208px;top:272px;width:80px;height:2px;background:#1e6e42"></div>
<div class="a" style="left:1287px;top:256px;width:1px;height:17px;background:#d2d2d2"></div>
<div class="t" style="left:1147.5px;width:200px;text-align:center;top:257.54px;font-size:12px;color:#1e6e42;">O</div>
<div class="t" style="left:1229px;width:200px;text-align:center;top:257.54px;font-size:12px;color:#444;">P</div>
<div class="a" style="left:272px;top:256px;width:1px;height:17px;background:#d2d2d2"></div>
<div class="a" style="left:275px;top:256px;width:1px;height:17px;background:#d2d2d2"></div>
<div class="a" style="left:25px;top:273px;width:1320px;height:1px;background:#ababab"></div>
<div class="a" style="left:0px;top:274px;width:25px;height:404px;background:#f0f0f0"></div>
<div class="a" style="left:25px;top:256px;width:1px;height:17px;background:#d2d2d2"></div>
<div class="a" style="left:25px;top:273px;width:1px;height:405px;background:#b8b8b8"></div>
<div class="a" style="left:98px;top:274px;width:1px;height:404px;background:#dadada"></div>
<div class="a" style="left:191px;top:274px;width:1px;height:404px;background:#dadada"></div>
<div class="a" style="left:273px;top:274px;width:1px;height:404px;background:#dadada"></div>
<div class="a" style="left:336px;top:274px;width:1px;height:404px;background:#dadada"></div>
<div class="a" style="left:442px;top:274px;width:1px;height:404px;background:#dadada"></div>
<div class="a" style="left:564px;top:274px;width:1px;height:404px;background:#dadada"></div>
<div class="a" style="left:669px;top:274px;width:1px;height:404px;background:#dadada"></div>
<div class="a" style="left:859px;top:274px;width:1px;height:404px;background:#dadada"></div>
<div class="a" style="left:988px;top:274px;width:1px;height:404px;background:#dadada"></div>
<div class="a" style="left:1121px;top:274px;width:1px;height:404px;background:#dadada"></div>
<div class="a" style="left:1208px;top:274px;width:1px;height:404px;background:#dadada"></div>
<div class="a" style="left:1287px;top:274px;width:1px;height:404px;background:#dadada"></div>
<div class="a" style="left:273px;top:274px;width:1px;height:404px;background:#dadada"></div>
<div class="a" style="left:26px;top:318px;width:1319px;height:1px;background:#dadada"></div>
<div class="a" style="left:26px;top:338px;width:1319px;height:1px;background:#dadada"></div>
<div class="a" style="left:26px;top:358px;width:1319px;height:1px;background:#dadada"></div>
<div class="a" style="left:26px;top:378px;width:1319px;height:1px;background:#dadada"></div>
<div class="a" style="left:3px;top:318px;width:21px;height:1px;background:#dcdcdc"></div>
<div class="t" style="left:-87.2px;width:200px;text-align:center;top:298.84px;font-size:12px;color:#444;">1</div>
<div class="a" style="left:3px;top:338px;width:21px;height:1px;background:#dcdcdc"></div>
<div class="t" style="left:-87.2px;width:200px;text-align:center;top:323.64px;font-size:12px;color:#444;">2</div>
<div class="a" style="left:0px;top:339px;width:25px;height:19px;background:#dedede"></div>
<div class="a" style="left:24px;top:338px;width:2px;height:21px;background:#1e6e42"></div>
<div class="a" style="left:3px;top:358px;width:21px;height:1px;background:#dcdcdc"></div>
<div class="t" style="left:-87.2px;width:200px;text-align:center;top:343.64px;font-size:12px;color:#1e6e42;">3</div>
<div class="a" style="left:3px;top:378px;width:21px;height:1px;background:#dcdcdc"></div>
<div class="t" style="left:-87.2px;width:200px;text-align:center;top:363.64px;font-size:12px;color:#444;">4</div>
<div class="t" style="left:-87.2px;width:200px;text-align:center;top:387.64px;font-size:12px;color:#444;">5</div>
<div class="a" style="left:3px;top:422px;width:21px;height:1px;background:#dcdcdc"></div>
<div class="t" style="left:-87.2px;width:200px;text-align:center;top:407.64px;font-size:12px;color:#444;">9</div>
<div class="a" style="left:3px;top:442px;width:21px;height:1px;background:#dcdcdc"></div>
<div class="t" style="left:-87.2px;width:200px;text-align:center;top:427.64px;font-size:12px;color:#444;">10</div>
<div class="a" style="left:3px;top:462px;width:21px;height:1px;background:#dcdcdc"></div>
<div class="t" style="left:-87.2px;width:200px;text-align:center;top:447.64px;font-size:12px;color:#444;">11</div>
<div class="a" style="left:3px;top:482px;width:21px;height:1px;background:#dcdcdc"></div>
<div class="t" style="left:-87.2px;width:200px;text-align:center;top:467.64px;font-size:12px;color:#444;">12</div>
<div class="a" style="left:3px;top:502px;width:21px;height:1px;background:#dcdcdc"></div>
<div class="t" style="left:-87.2px;width:200px;text-align:center;top:487.64px;font-size:12px;color:#444;">13</div>
<div class="a" style="left:3px;top:522px;width:21px;height:1px;background:#dcdcdc"></div>
<div class="t" style="left:-87.2px;width:200px;text-align:center;top:507.64px;font-size:12px;color:#444;">14</div>
<div class="a" style="left:3px;top:542px;width:21px;height:1px;background:#dcdcdc"></div>
<div class="t" style="left:-87.2px;width:200px;text-align:center;top:527.64px;font-size:12px;color:#444;">15</div>
<div class="a" style="left:3px;top:562px;width:21px;height:1px;background:#dcdcdc"></div>
<div class="t" style="left:-87.2px;width:200px;text-align:center;top:547.64px;font-size:12px;color:#444;">16</div>
<div class="a" style="left:3px;top:582px;width:21px;height:1px;background:#dcdcdc"></div>
<div class="t" style="left:-87.2px;width:200px;text-align:center;top:567.64px;font-size:12px;color:#444;">17</div>
<div class="a" style="left:3px;top:602px;width:21px;height:1px;background:#dcdcdc"></div>
<div class="t" style="left:-87.2px;width:200px;text-align:center;top:587.64px;font-size:12px;color:#444;">18</div>
<div class="a" style="left:3px;top:622px;width:21px;height:1px;background:#dcdcdc"></div>
<div class="t" style="left:-87.2px;width:200px;text-align:center;top:607.64px;font-size:12px;color:#444;">19</div>
<div class="a" style="left:3px;top:642px;width:21px;height:1px;background:#dcdcdc"></div>
<div class="t" style="left:-87.2px;width:200px;text-align:center;top:627.64px;font-size:12px;color:#444;">20</div>
<div class="a" style="left:3px;top:662px;width:21px;height:1px;background:#dcdcdc"></div>
<div class="t" style="left:-87.2px;width:200px;text-align:center;top:647.64px;font-size:12px;color:#444;">21</div>
<div class="a" style="left:3px;top:682px;width:21px;height:1px;background:#dcdcdc"></div>
<div class="t" style="left:-87.2px;width:200px;text-align:center;top:667.64px;font-size:12px;color:#444;">22</div>
<div class="a" style="left:26px;top:274px;width:1319px;height:45px;background:#5b9bd5"></div>
<div class="t " style="left:37.5px;top:282.66px;font-size:28.4px;color:#fff;">Shipping Data</div>
<div class="a" style="left:26px;top:338px;width:72px;height:21px;background:#5b9bd5"></div>
<div class="t " style="left:28.5px;top:343.17px;font-size:13.5px;color:#fff;">Orders:</div>
<div class="a" style="left:98px;top:338px;width:94px;height:21px;background:#3f3f3f"></div>
<div class="a" style="left:99px;top:339px;width:92px;height:19px;background:#fff"></div>
<div class="a" style="left:100px;top:340px;width:90px;height:17px;background:#f2f2f2"></div>
<div class="t" style="right:1177.5px;top:343.84px;font-size:12px;color:#3f3f3f;font-weight:700;">1039</div>
<div class="a" style="left:442px;top:338px;width:122px;height:21px;background:#5b9bd5"></div>
<div class="t " style="left:445.5px;top:342.83px;font-size:13.9px;color:#fff;">Missing Priorities:</div>
<div class="a" style="left:564px;top:338px;width:106px;height:21px;background:#3f3f3f"></div>
<div class="a" style="left:565px;top:339px;width:104px;height:19px;background:#fff"></div>
<div class="a" style="left:566px;top:340px;width:102px;height:17px;background:#f2f2f2"></div>
<div class="t" style="right:698.8px;top:343.42px;font-size:12.5px;color:#333;">2</div>
<div class="a" style="left:1121px;top:338px;width:87px;height:21px;background:#5b9bd5"></div>
<div class="t " style="left:1124.5px;top:342.83px;font-size:13.9px;color:#fff;">Shipped:</div>
<div class="a" style="left:1207px;top:337px;width:82px;height:23px;background:#1e6e42"></div>
<div class="a" style="left:1209px;top:339px;width:78px;height:19px;background:#fff"></div>
<div class="a" style="left:1210px;top:340px;width:76px;height:17px;background:#f2f2f2"></div>
<div class="t" style="right:81.79999999999995px;top:343.84px;font-size:12px;color:#3f3f3f;font-weight:700;">1037</div>
<div class="a" style="left:1284px;top:354px;width:7px;height:7px;background:#fff"></div>
<div class="a" style="left:1285px;top:355px;width:5px;height:5px;background:#1e6e42"></div>
<div class="a" style="left:26px;top:378px;width:1319px;height:24px;background:#5b9bd5"></div>
<div class="clip" style="left:26px;top:379px;width:72px;height:23px">
<div class="t " style="left:1.5px;top:9.05px;font-size:12.7px;color:#fff;font-weight:700;">Order No</div>
</div>
<div class="a" style="left:81px;top:384px;width:15px;height:15px;border:1px solid #b4b0ac;background:#f5f5f5"></div>
<svg class="a" style="left:86px;top:391px;" width="7" height="4" viewBox="0 0 7 4"><path d="M0 0 H7 L3.5 4 Z" fill="#5a5a5a"/></svg>
<div class="clip" style="left:99px;top:379px;width:92px;height:23px">
<div class="t " style="left:1.5px;top:9.05px;font-size:12.7px;color:#fff;font-weight:700;">Order Date</div>
</div>
<div class="a" style="left:174px;top:384px;width:15px;height:15px;border:1px solid #b4b0ac;background:#f5f5f5"></div>
<svg class="a" style="left:179px;top:391px;" width="7" height="4" viewBox="0 0 7 4"><path d="M0 0 H7 L3.5 4 Z" fill="#5a5a5a"/></svg>
<div class="clip" style="left:192px;top:379px;width:81px;height:23px">
<div class="t " style="left:1.5px;top:9.05px;font-size:12.7px;color:#fff;font-weight:700;">Order Year</div>
</div>
<div class="a" style="left:256px;top:384px;width:15px;height:15px;border:1px solid #b4b0ac;background:#f5f5f5"></div>
<svg class="a" style="left:261px;top:391px;" width="7" height="4" viewBox="0 0 7 4"><path d="M0 0 H7 L3.5 4 Z" fill="#5a5a5a"/></svg>
<div class="clip" style="left:274px;top:379px;width:62px;height:23px">
<div class="t " style="left:1.5px;top:9.05px;font-size:12.7px;color:#fff;font-weight:700;">State</div>
</div>
<div class="a" style="left:319px;top:384px;width:15px;height:15px;border:1px solid #b4b0ac;background:#f5f5f5"></div>
<svg class="a" style="left:324px;top:391px;" width="7" height="4" viewBox="0 0 7 4"><path d="M0 0 H7 L3.5 4 Z" fill="#5a5a5a"/></svg>
<div class="clip" style="left:337px;top:379px;width:105px;height:23px">
<div class="t " style="left:1.5px;top:9.05px;font-size:12.7px;color:#fff;font-weight:700;">Customer Type</div>
</div>
<div class="a" style="left:425px;top:384px;width:15px;height:15px;border:1px solid #b4b0ac;background:#f5f5f5"></div>
<svg class="a" style="left:430px;top:391px;" width="7" height="4" viewBox="0 0 7 4"><path d="M0 0 H7 L3.5 4 Z" fill="#5a5a5a"/></svg>
<div class="clip" style="left:443px;top:379px;width:121px;height:23px">
<div class="t " style="left:1.5px;top:9.05px;font-size:12.7px;color:#fff;font-weight:700;">Account Manager</div>
</div>
<div class="a" style="left:547px;top:384px;width:15px;height:15px;border:1px solid #b4b0ac;background:#f5f5f5"></div>
<svg class="a" style="left:552px;top:391px;" width="7" height="4" viewBox="0 0 7 4"><path d="M0 0 H7 L3.5 4 Z" fill="#5a5a5a"/></svg>
<div class="clip" style="left:565px;top:379px;width:104px;height:23px">
<div class="t " style="left:1.5px;top:9.05px;font-size:12.7px;color:#fff;font-weight:700;">Order Priority</div>
</div>
<div class="a" style="left:652px;top:384px;width:15px;height:15px;border:1px solid #b4b0ac;background:#f5f5f5"></div>
<svg class="a" style="left:657px;top:391px;" width="7" height="4" viewBox="0 0 7 4"><path d="M0 0 H7 L3.5 4 Z" fill="#5a5a5a"/></svg>
<div class="clip" style="left:670px;top:379px;width:189px;height:23px">
<div class="t " style="left:1.5px;top:9.05px;font-size:12.7px;color:#fff;font-weight:700;">Product Name</div>
</div>
<div class="a" style="left:842px;top:384px;width:15px;height:15px;border:1px solid #b4b0ac;background:#f5f5f5"></div>
<svg class="a" style="left:847px;top:391px;" width="7" height="4" viewBox="0 0 7 4"><path d="M0 0 H7 L3.5 4 Z" fill="#5a5a5a"/></svg>
<div class="clip" style="left:860px;top:379px;width:128px;height:23px">
<div class="t " style="left:1.5px;top:9.05px;font-size:12.7px;color:#fff;font-weight:700;">Product Category</div>
</div>
<div class="a" style="left:971px;top:384px;width:15px;height:15px;border:1px solid #b4b0ac;background:#f5f5f5"></div>
<svg class="a" style="left:976px;top:391px;" width="7" height="4" viewBox="0 0 7 4"><path d="M0 0 H7 L3.5 4 Z" fill="#5a5a5a"/></svg>
<div class="clip" style="left:989px;top:379px;width:132px;height:23px">
<div class="t " style="left:1.5px;top:9.05px;font-size:12.7px;color:#fff;font-weight:700;">Product Container</div>
</div>
<div class="a" style="left:1104px;top:384px;width:15px;height:15px;border:1px solid #b4b0ac;background:#f5f5f5"></div>
<svg class="a" style="left:1109px;top:391px;" width="7" height="4" viewBox="0 0 7 4"><path d="M0 0 H7 L3.5 4 Z" fill="#5a5a5a"/></svg>
<div class="clip" style="left:1122px;top:379px;width:86px;height:23px">
<div class="t " style="left:1.5px;top:9.05px;font-size:12.7px;color:#fff;font-weight:700;">Ship Mode</div>
</div>
<div class="a" style="left:1191px;top:384px;width:15px;height:15px;border:1px solid #b4b0ac;background:#f5f5f5"></div>
<svg class="a" style="left:1196px;top:391px;" width="7" height="4" viewBox="0 0 7 4"><path d="M0 0 H7 L3.5 4 Z" fill="#5a5a5a"/></svg>
<div class="clip" style="left:1209px;top:379px;width:78px;height:23px">
<div class="t " style="left:1.5px;top:9.05px;font-size:12.7px;color:#fff;font-weight:700;">Ship Date</div>
</div>
<div class="a" style="left:1270px;top:384px;width:15px;height:15px;border:1px solid #b4b0ac;background:#f5f5f5"></div>
<svg class="a" style="left:1275px;top:391px;" width="7" height="4" viewBox="0 0 7 4"><path d="M0 0 H7 L3.5 4 Z" fill="#5a5a5a"/></svg>
<div class="clip" style="left:1288px;top:379px;width:57px;height:23px">
<div class="t " style="left:1.5px;top:9.05px;font-size:12.7px;color:#fff;font-weight:700;">Cost Price</div>
</div>
<div class="clip" style="left:0;top:0;width:1345px;height:678px">
<div class="a" style="left:26px;top:422px;width:1319px;height:1px;background:#8eaadb"></div>
<div class="clip" style="left:26px;top:403px;width:72px;height:19px">
<div class="t " style="left:1.8px;top:3.57px;font-size:13.5px;color:#000;letter-spacing:-0.6px;">5019-1</div>
</div>
<div class="clip" style="left:99px;top:403px;width:92px;height:19px">
<div class="t" style="right:2.5px;top:3.57px;font-size:13.5px;color:#000;letter-spacing:-0.45px">13-02-13</div>
</div>
<div class="clip" style="left:192px;top:403px;width:81px;height:19px">
<div class="t " style="left:1.8px;top:3.57px;font-size:13.5px;color:#000;letter-spacing:-0.6px;">2013</div>
</div>
<div class="clip" style="left:274px;top:403px;width:62px;height:19px">
<div class="t " style="left:1.8px;top:3.57px;font-size:13.5px;color:#000;">VIC</div>
</div>
<div class="clip" style="left:337px;top:403px;width:105px;height:19px">
<div class="t " style="left:1.8px;top:3.57px;font-size:13.5px;color:#000;">Home Office</div>
</div>
<div class="clip" style="left:443px;top:403px;width:121px;height:19px">
<div class="t " style="left:1.8px;top:3.57px;font-size:13.5px;color:#000;">Yvette Biti</div>
</div>
<div class="clip" style="left:565px;top:403px;width:104px;height:19px">
<div class="t " style="left:1.8px;top:3.57px;font-size:13.5px;color:#000;">High</div>
</div>
<div class="clip" style="left:670px;top:403px;width:189px;height:19px">
<div class="t " style="left:1.8px;top:3.57px;font-size:13.5px;color:#000;">Cando S750 Color Inkjet Printer</div>
</div>
<div class="clip" style="left:860px;top:403px;width:128px;height:19px">
<div class="t " style="left:1.8px;top:3.57px;font-size:13.5px;color:#000;">Technology</div>
</div>
<div class="clip" style="left:989px;top:403px;width:132px;height:19px">
<div class="t " style="left:1.8px;top:3.57px;font-size:13.5px;color:#000;">Jumbo Drum</div>
</div>
<div class="clip" style="left:1122px;top:403px;width:86px;height:19px">
<div class="t " style="left:1.8px;top:3.57px;font-size:13.5px;color:#000;">Delivery Truck</div>
</div>
<div class="clip" style="left:1209px;top:403px;width:78px;height:19px">
<div class="t" style="right:2.5px;top:3.57px;font-size:13.5px;color:#000;letter-spacing:-0.45px">15-02-13</div>
</div>
<div class="clip" style="left:1288px;top:403px;width:57px;height:19px">
<div class="t " style="left:41.40000000000009px;top:3.57px;font-size:13.5px;color:#000;letter-spacing:-0.4px;">$7</div>
</div>
<div class="a" style="left:26px;top:423px;width:1319px;height:19px;background:#d9e1f2"></div>
<div class="a" style="left:26px;top:442px;width:1319px;height:1px;background:#8eaadb"></div>
<div class="clip" style="left:26px;top:423px;width:72px;height:19px">
<div class="t " style="left:1.8px;top:3.57px;font-size:13.5px;color:#000;letter-spacing:-0.6px;">5020-1</div>
</div>
<div class="clip" style="left:99px;top:423px;width:92px;height:19px">
<div class="t" style="right:2.5px;top:3.57px;font-size:13.5px;color:#000;letter-spacing:-0.45px">14-02-13</div>
</div>
<div class="clip" style="left:192px;top:423px;width:81px;height:19px">
<div class="t " style="left:1.8px;top:3.57px;font-size:13.5px;color:#000;letter-spacing:-0.6px;">2013</div>
</div>
<div class="clip" style="left:274px;top:423px;width:62px;height:19px">
<div class="t " style="left:1.8px;top:3.57px;font-size:13.5px;color:#000;">NSW</div>
</div>
<div class="clip" style="left:337px;top:423px;width:105px;height:19px">
<div class="t " style="left:1.8px;top:3.57px;font-size:13.5px;color:#000;">Consumer</div>
</div>
<div class="clip" style="left:443px;top:423px;width:121px;height:19px">
<div class="t " style="left:1.8px;top:3.57px;font-size:13.5px;color:#000;">Nicholas Fernandes</div>
</div>
<div class="clip" style="left:565px;top:423px;width:104px;height:19px">
<div class="t " style="left:1.8px;top:3.57px;font-size:13.5px;color:#000;">Critical</div>
</div>
<div class="clip" style="left:670px;top:423px;width:189px;height:19px">
<div class="t " style="left:1.8px;top:3.57px;font-size:13.5px;color:#000;">Steady EarthWrite Recycled Pencils</div>
</div>
<div class="clip" style="left:860px;top:423px;width:128px;height:19px">
<div class="t " style="left:1.8px;top:3.57px;font-size:13.5px;color:#000;">Office Supplies</div>
</div>
<div class="clip" style="left:989px;top:423px;width:132px;height:19px">
<div class="t " style="left:1.8px;top:3.57px;font-size:13.5px;color:#000;">Wrap Bag</div>
</div>
<div class="clip" style="left:1122px;top:423px;width:86px;height:19px">
<div class="t " style="left:1.8px;top:3.57px;font-size:13.5px;color:#000;">Regular Air</div>
</div>
<div class="clip" style="left:1209px;top:423px;width:78px;height:19px">
<div class="t" style="right:2.5px;top:3.57px;font-size:13.5px;color:#000;letter-spacing:-0.45px">15-02-13</div>
</div>
<div class="clip" style="left:1288px;top:423px;width:57px;height:19px">
<div class="t " style="left:49.59999999999991px;top:3.57px;font-size:13.5px;color:#000;letter-spacing:-0.4px;">$</div>
</div>
<div class="a" style="left:26px;top:462px;width:1319px;height:1px;background:#8eaadb"></div>
<div class="clip" style="left:26px;top:443px;width:72px;height:19px">
<div class="t " style="left:1.8px;top:3.57px;font-size:13.5px;color:#000;letter-spacing:-0.6px;">5023-1</div>
</div>
<div class="clip" style="left:99px;top:443px;width:92px;height:19px">
<div class="t" style="right:2.5px;top:3.57px;font-size:13.5px;color:#000;letter-spacing:-0.45px">17-02-13</div>
</div>
<div class="clip" style="left:192px;top:443px;width:81px;height:19px">
<div class="t " style="left:1.8px;top:3.57px;font-size:13.5px;color:#000;letter-spacing:-0.6px;">2013</div>
</div>
<div class="clip" style="left:274px;top:443px;width:62px;height:19px">
<div class="t " style="left:1.8px;top:3.57px;font-size:13.5px;color:#000;">VIC</div>
</div>
<div class="clip" style="left:337px;top:443px;width:105px;height:19px">
<div class="t " style="left:1.8px;top:3.57px;font-size:13.5px;color:#000;">Home Office</div>
</div>
<div class="clip" style="left:443px;top:443px;width:121px;height:19px">
<div class="t " style="left:1.8px;top:3.57px;font-size:13.5px;color:#000;">Yvette Biti</div>
</div>
<div class="clip" style="left:565px;top:443px;width:104px;height:19px">
<div class="t " style="left:1.8px;top:3.57px;font-size:13.5px;color:#000;">Low</div>
</div>
<div class="clip" style="left:670px;top:443px;width:189px;height:19px">
<div class="t " style="left:1.8px;top:3.57px;font-size:13.5px;color:#000;">12 Colored Short Pencils</div>
</div>
<div class="clip" style="left:860px;top:443px;width:128px;height:19px">
<div class="t " style="left:1.8px;top:3.57px;font-size:13.5px;color:#000;">Office Supplies</div>
</div>
<div class="clip" style="left:989px;top:443px;width:132px;height:19px">
<div class="t " style="left:1.8px;top:3.57px;font-size:13.5px;color:#000;">Wrap Bag</div>
</div>
<div class="clip" style="left:1122px;top:443px;width:86px;height:19px">
<div class="t " style="left:1.8px;top:3.57px;font-size:13.5px;color:#000;">Regular Air</div>
</div>
<div class="clip" style="left:1209px;top:443px;width:78px;height:19px">
<div class="t" style="right:2.5px;top:3.57px;font-size:13.5px;color:#000;letter-spacing:-0.45px">22-02-13</div>
</div>
<div class="clip" style="left:1288px;top:443px;width:57px;height:19px">
<div class="t " style="left:49.59999999999991px;top:3.57px;font-size:13.5px;color:#000;letter-spacing:-0.4px;">$</div>
</div>
<div class="a" style="left:26px;top:463px;width:1319px;height:19px;background:#d9e1f2"></div>
<div class="a" style="left:26px;top:482px;width:1319px;height:1px;background:#8eaadb"></div>
<div class="clip" style="left:26px;top:463px;width:72px;height:19px">
<div class="t " style="left:1.8px;top:3.57px;font-size:13.5px;color:#000;letter-spacing:-0.6px;">5024-1</div>
</div>
<div class="clip" style="left:99px;top:463px;width:92px;height:19px">
<div class="t" style="right:2.5px;top:3.57px;font-size:13.5px;color:#000;letter-spacing:-0.45px">18-02-13</div>
</div>
<div class="clip" style="left:192px;top:463px;width:81px;height:19px">
<div class="t " style="left:1.8px;top:3.57px;font-size:13.5px;color:#000;letter-spacing:-0.6px;">2013</div>
</div>
<div class="clip" style="left:274px;top:463px;width:62px;height:19px">
<div class="t " style="left:1.8px;top:3.57px;font-size:13.5px;color:#000;">NSW</div>
</div>
<div class="clip" style="left:337px;top:463px;width:105px;height:19px">
<div class="t " style="left:1.8px;top:3.57px;font-size:13.5px;color:#000;">Corporate</div>
</div>
<div class="clip" style="left:443px;top:463px;width:121px;height:19px">
<div class="t " style="left:1.8px;top:3.57px;font-size:13.5px;color:#000;">Phoebe Gour</div>
</div>
<div class="clip" style="left:565px;top:463px;width:104px;height:19px">
<div class="t " style="left:1.8px;top:3.57px;font-size:13.5px;color:#000;">Critical</div>
</div>
<div class="clip" style="left:670px;top:463px;width:189px;height:19px">
<div class="t " style="left:1.8px;top:3.57px;font-size:13.5px;color:#000;">Multimedia Mailers</div>
</div>
<div class="clip" style="left:860px;top:463px;width:128px;height:19px">
<div class="t " style="left:1.8px;top:3.57px;font-size:13.5px;color:#000;">Office Supplies</div>
</div>
<div class="clip" style="left:989px;top:463px;width:132px;height:19px">
<div class="t " style="left:1.8px;top:3.57px;font-size:13.5px;color:#000;">Small Box</div>
</div>
<div class="clip" style="left:1122px;top:463px;width:86px;height:19px">
<div class="t " style="left:1.8px;top:3.57px;font-size:13.5px;color:#000;">Regular Air</div>
</div>
<div class="clip" style="left:1209px;top:463px;width:78px;height:19px">
<div class="t" style="right:2.5px;top:3.57px;font-size:13.5px;color:#000;letter-spacing:-0.45px">20-02-13</div>
</div>
<div class="clip" style="left:1288px;top:463px;width:57px;height:19px">
<div class="t " style="left:41.40000000000009px;top:3.57px;font-size:13.5px;color:#000;letter-spacing:-0.4px;">$9</div>
</div>
<div class="a" style="left:26px;top:502px;width:1319px;height:1px;background:#8eaadb"></div>
<div class="clip" style="left:26px;top:483px;width:72px;height:19px">
<div class="t " style="left:1.8px;top:3.57px;font-size:13.5px;color:#000;letter-spacing:-0.6px;">5025-1</div>
</div>
<div class="clip" style="left:99px;top:483px;width:92px;height:19px">
<div class="t" style="right:2.5px;top:3.57px;font-size:13.5px;color:#000;letter-spacing:-0.45px">20-02-13</div>
</div>
<div class="clip" style="left:192px;top:483px;width:81px;height:19px">
<div class="t " style="left:1.8px;top:3.57px;font-size:13.5px;color:#000;letter-spacing:-0.6px;">2013</div>
</div>
<div class="clip" style="left:274px;top:483px;width:62px;height:19px">
<div class="t " style="left:1.8px;top:3.57px;font-size:13.5px;color:#000;">NSW</div>
</div>
<div class="clip" style="left:337px;top:483px;width:105px;height:19px">
<div class="t " style="left:1.8px;top:3.57px;font-size:13.5px;color:#000;">Consumer</div>
</div>
<div class="clip" style="left:443px;top:483px;width:121px;height:19px">
<div class="t " style="left:1.8px;top:3.57px;font-size:13.5px;color:#000;">Phoebe Gour</div>
</div>
<div class="clip" style="left:565px;top:483px;width:104px;height:19px">
<div class="t " style="left:1.8px;top:3.57px;font-size:13.5px;color:#000;">Critical</div>
</div>
<div class="clip" style="left:670px;top:483px;width:189px;height:19px">
<div class="t " style="left:1.8px;top:3.57px;font-size:13.5px;color:#000;">Pizazz Dustless Chalk Sticks</div>
</div>
<div class="clip" style="left:860px;top:483px;width:128px;height:19px">
<div class="t " style="left:1.8px;top:3.57px;font-size:13.5px;color:#000;">Office Supplies</div>
</div>
<div class="clip" style="left:989px;top:483px;width:132px;height:19px">
<div class="t " style="left:1.8px;top:3.57px;font-size:13.5px;color:#000;">Wrap Bag</div>
</div>
<div class="clip" style="left:1122px;top:483px;width:86px;height:19px">
<div class="t " style="left:1.8px;top:3.57px;font-size:13.5px;color:#000;">Regular Air</div>
</div>
<div class="clip" style="left:1209px;top:483px;width:78px;height:19px">
<div class="t" style="right:2.5px;top:3.57px;font-size:13.5px;color:#000;letter-spacing:-0.45px">22-02-13</div>
</div>
<div class="clip" style="left:1288px;top:483px;width:57px;height:19px">
<div class="t " style="left:49.59999999999991px;top:3.57px;font-size:13.5px;color:#000;letter-spacing:-0.4px;">$</div>
</div>
<div class="a" style="left:26px;top:503px;width:1319px;height:19px;background:#d9e1f2"></div>
<div class="a" style="left:26px;top:522px;width:1319px;height:1px;background:#8eaadb"></div>
<div class="clip" style="left:26px;top:503px;width:72px;height:19px">
<div class="t " style="left:1.8px;top:3.57px;font-size:13.5px;color:#000;letter-spacing:-0.6px;">5027-1</div>
</div>
<div class="clip" style="left:99px;top:503px;width:92px;height:19px">
<div class="t" style="right:2.5px;top:3.57px;font-size:13.5px;color:#000;letter-spacing:-0.45px">22-02-13</div>
</div>
<div class="clip" style="left:192px;top:503px;width:81px;height:19px">
<div class="t " style="left:1.8px;top:3.57px;font-size:13.5px;color:#000;letter-spacing:-0.6px;">2013</div>
</div>
<div class="clip" style="left:274px;top:503px;width:62px;height:19px">
<div class="t " style="left:1.8px;top:3.57px;font-size:13.5px;color:#000;">NSW</div>
</div>
<div class="clip" style="left:337px;top:503px;width:105px;height:19px">
<div class="t " style="left:1.8px;top:3.57px;font-size:13.5px;color:#000;">Small Business</div>
</div>
<div class="clip" style="left:443px;top:503px;width:121px;height:19px">
<div class="t " style="left:1.8px;top:3.57px;font-size:13.5px;color:#000;">Leighton Forrest</div>
</div>
<div class="clip" style="left:565px;top:503px;width:104px;height:19px">
<div class="t " style="left:1.8px;top:3.57px;font-size:13.5px;color:#000;">Not Specified</div>
</div>
<div class="clip" style="left:670px;top:503px;width:189px;height:19px">
<div class="t " style="left:1.8px;top:3.57px;font-size:13.5px;color:#000;">TypeRight Side-Opening Peel &amp; Seal</div>
</div>
<div class="clip" style="left:860px;top:503px;width:128px;height:19px">
<div class="t " style="left:1.8px;top:3.57px;font-size:13.5px;color:#000;">Office Supplies</div>
</div>
<div class="clip" style="left:989px;top:503px;width:132px;height:19px">
<div class="t " style="left:1.8px;top:3.57px;font-size:13.5px;color:#000;">Small Box</div>
</div>
<div class="clip" style="left:1122px;top:503px;width:86px;height:19px">
<div class="t " style="left:1.8px;top:3.57px;font-size:13.5px;color:#000;">Regular Air</div>
</div>
<div class="clip" style="left:1209px;top:503px;width:78px;height:19px">
<div class="t" style="right:2.5px;top:3.57px;font-size:13.5px;color:#000;letter-spacing:-0.45px">23-02-13</div>
</div>
<div class="clip" style="left:1288px;top:503px;width:57px;height:19px">
<div class="t " style="left:41.40000000000009px;top:3.57px;font-size:13.5px;color:#000;letter-spacing:-0.4px;">$5</div>
</div>
<div class="a" style="left:26px;top:542px;width:1319px;height:1px;background:#8eaadb"></div>
<div class="clip" style="left:26px;top:523px;width:72px;height:19px">
<div class="t " style="left:1.8px;top:3.57px;font-size:13.5px;color:#000;letter-spacing:-0.6px;">5029-1</div>
</div>
<div class="clip" style="left:99px;top:523px;width:92px;height:19px">
<div class="t" style="right:2.5px;top:3.57px;font-size:13.5px;color:#000;letter-spacing:-0.45px">23-02-13</div>
</div>
<div class="clip" style="left:192px;top:523px;width:81px;height:19px">
<div class="t " style="left:1.8px;top:3.57px;font-size:13.5px;color:#000;letter-spacing:-0.6px;">2013</div>
</div>
<div class="clip" style="left:274px;top:523px;width:62px;height:19px">
<div class="t " style="left:1.8px;top:3.57px;font-size:13.5px;color:#000;">NSW</div>
</div>
<div class="clip" style="left:337px;top:523px;width:105px;height:19px">
<div class="t " style="left:1.8px;top:3.57px;font-size:13.5px;color:#000;">Corporate</div>
</div>
<div class="clip" style="left:443px;top:523px;width:121px;height:19px">
<div class="t " style="left:1.8px;top:3.57px;font-size:13.5px;color:#000;">Natasha Song</div>
</div>
<div class="clip" style="left:565px;top:523px;width:104px;height:19px">
<div class="t " style="left:1.8px;top:3.57px;font-size:13.5px;color:#000;">Not Specified</div>
</div>
<div class="clip" style="left:670px;top:523px;width:189px;height:19px">
<div class="t " style="left:1.8px;top:3.57px;font-size:13.5px;color:#000;">Artisan Printable Repositionable</div>
</div>
<div class="clip" style="left:860px;top:523px;width:128px;height:19px">
<div class="t " style="left:1.8px;top:3.57px;font-size:13.5px;color:#000;">Office Supplies</div>
</div>
<div class="clip" style="left:989px;top:523px;width:132px;height:19px">
<div class="t " style="left:1.8px;top:3.57px;font-size:13.5px;color:#000;">Small Box</div>
</div>
<div class="clip" style="left:1122px;top:523px;width:86px;height:19px">
<div class="t " style="left:1.8px;top:3.57px;font-size:13.5px;color:#000;">Regular Air</div>
</div>
<div class="clip" style="left:1209px;top:523px;width:78px;height:19px">
<div class="t" style="right:2.5px;top:3.57px;font-size:13.5px;color:#000;letter-spacing:-0.45px">23-02-13</div>
</div>
<div class="clip" style="left:1288px;top:523px;width:57px;height:19px">
<div class="t " style="left:49.59999999999991px;top:3.57px;font-size:13.5px;color:#000;letter-spacing:-0.4px;">$</div>
</div>
<div class="a" style="left:26px;top:543px;width:1319px;height:19px;background:#d9e1f2"></div>
<div class="a" style="left:26px;top:562px;width:1319px;height:1px;background:#8eaadb"></div>
<div class="clip" style="left:26px;top:543px;width:72px;height:19px">
<div class="t " style="left:1.8px;top:3.57px;font-size:13.5px;color:#000;letter-spacing:-0.6px;">5031-1</div>
</div>
<div class="clip" style="left:99px;top:543px;width:92px;height:19px">
<div class="t" style="right:2.5px;top:3.57px;font-size:13.5px;color:#000;letter-spacing:-0.45px">25-02-13</div>
</div>
<div class="clip" style="left:192px;top:543px;width:81px;height:19px">
<div class="t " style="left:1.8px;top:3.57px;font-size:13.5px;color:#000;letter-spacing:-0.6px;">2013</div>
</div>
<div class="clip" style="left:274px;top:543px;width:62px;height:19px">
<div class="t " style="left:1.8px;top:3.57px;font-size:13.5px;color:#000;">VIC</div>
</div>
<div class="clip" style="left:337px;top:543px;width:105px;height:19px">
<div class="t " style="left:1.8px;top:3.57px;font-size:13.5px;color:#000;">Corporate</div>
</div>
<div class="clip" style="left:443px;top:543px;width:121px;height:19px">
<div class="t " style="left:1.8px;top:3.57px;font-size:13.5px;color:#000;">Connor Betts</div>
</div>
<div class="clip" style="left:565px;top:543px;width:104px;height:19px">
<div class="t " style="left:1.8px;top:3.57px;font-size:13.5px;color:#000;">Medium</div>
</div>
<div class="clip" style="left:670px;top:543px;width:189px;height:19px">
<div class="t " style="left:1.8px;top:3.57px;font-size:13.5px;color:#000;">Security-Tint Envelopes</div>
</div>
<div class="clip" style="left:860px;top:543px;width:128px;height:19px">
<div class="t " style="left:1.8px;top:3.57px;font-size:13.5px;color:#000;">Office Supplies</div>
</div>
<div class="clip" style="left:989px;top:543px;width:132px;height:19px">
<div class="t " style="left:1.8px;top:3.57px;font-size:13.5px;color:#000;">Small Box</div>
</div>
<div class="clip" style="left:1122px;top:543px;width:86px;height:19px">
<div class="t " style="left:1.8px;top:3.57px;font-size:13.5px;color:#000;">Regular Air</div>
</div>
<div class="clip" style="left:1209px;top:543px;width:78px;height:19px">
<div class="t" style="right:2.5px;top:3.57px;font-size:13.5px;color:#000;letter-spacing:-0.45px">27-02-13</div>
</div>
<div class="clip" style="left:1288px;top:543px;width:57px;height:19px">
<div class="t " style="left:49.59999999999991px;top:3.57px;font-size:13.5px;color:#000;letter-spacing:-0.4px;">$</div>
</div>
<div class="a" style="left:26px;top:582px;width:1319px;height:1px;background:#8eaadb"></div>
<div class="clip" style="left:26px;top:563px;width:72px;height:19px">
<div class="t " style="left:1.8px;top:3.57px;font-size:13.5px;color:#000;letter-spacing:-0.6px;">5033-1</div>
</div>
<div class="clip" style="left:99px;top:563px;width:92px;height:19px">
<div class="t" style="right:2.5px;top:3.57px;font-size:13.5px;color:#000;letter-spacing:-0.45px">25-02-13</div>
</div>
<div class="clip" style="left:192px;top:563px;width:81px;height:19px">
<div class="t " style="left:1.8px;top:3.57px;font-size:13.5px;color:#000;letter-spacing:-0.6px;">2013</div>
</div>
<div class="clip" style="left:274px;top:563px;width:62px;height:19px">
<div class="t " style="left:1.8px;top:3.57px;font-size:13.5px;color:#000;">NSW</div>
</div>
<div class="clip" style="left:337px;top:563px;width:105px;height:19px">
<div class="t " style="left:1.8px;top:3.57px;font-size:13.5px;color:#000;">Corporate</div>
</div>
<div class="clip" style="left:443px;top:563px;width:121px;height:19px">
<div class="t " style="left:1.8px;top:3.57px;font-size:13.5px;color:#000;">Samantha Chairs</div>
</div>
<div class="clip" style="left:565px;top:563px;width:104px;height:19px">
<div class="t " style="left:1.8px;top:3.57px;font-size:13.5px;color:#000;">Medium</div>
</div>
<div class="clip" style="left:670px;top:563px;width:189px;height:19px">
<div class="t " style="left:1.8px;top:3.57px;font-size:13.5px;color:#000;">TypeRight Side-Opening Peel &amp; Seal</div>
</div>
<div class="clip" style="left:860px;top:563px;width:128px;height:19px">
<div class="t " style="left:1.8px;top:3.57px;font-size:13.5px;color:#000;">Office Supplies</div>
</div>
<div class="clip" style="left:989px;top:563px;width:132px;height:19px">
<div class="t " style="left:1.8px;top:3.57px;font-size:13.5px;color:#000;">Small Box</div>
</div>
<div class="clip" style="left:1122px;top:563px;width:86px;height:19px">
<div class="t " style="left:1.8px;top:3.57px;font-size:13.5px;color:#000;">Regular Air</div>
</div>
<div class="clip" style="left:1209px;top:563px;width:78px;height:19px">
<div class="t" style="right:2.5px;top:3.57px;font-size:13.5px;color:#000;letter-spacing:-0.45px">27-02-13</div>
</div>
<div class="clip" style="left:1288px;top:563px;width:57px;height:19px">
<div class="t " style="left:41.40000000000009px;top:3.57px;font-size:13.5px;color:#000;letter-spacing:-0.4px;">$5</div>
</div>
<div class="a" style="left:26px;top:583px;width:1319px;height:19px;background:#d9e1f2"></div>
<div class="a" style="left:26px;top:602px;width:1319px;height:1px;background:#8eaadb"></div>
<div class="clip" style="left:26px;top:583px;width:72px;height:19px">
<div class="t " style="left:1.8px;top:3.57px;font-size:13.5px;color:#000;letter-spacing:-0.6px;">5034-1</div>
</div>
<div class="clip" style="left:99px;top:583px;width:92px;height:19px">
<div class="t" style="right:2.5px;top:3.57px;font-size:13.5px;color:#000;letter-spacing:-0.45px">26-02-13</div>
</div>
<div class="clip" style="left:192px;top:583px;width:81px;height:19px">
<div class="t " style="left:1.8px;top:3.57px;font-size:13.5px;color:#000;letter-spacing:-0.6px;">2013</div>
</div>
<div class="clip" style="left:274px;top:583px;width:62px;height:19px">
<div class="t " style="left:1.8px;top:3.57px;font-size:13.5px;color:#000;">NSW</div>
</div>
<div class="clip" style="left:337px;top:583px;width:105px;height:19px">
<div class="t " style="left:1.8px;top:3.57px;font-size:13.5px;color:#000;">Corporate</div>
</div>
<div class="clip" style="left:443px;top:583px;width:121px;height:19px">
<div class="t " style="left:1.8px;top:3.57px;font-size:13.5px;color:#000;">Phoebe Gour</div>
</div>
<div class="clip" style="left:565px;top:583px;width:104px;height:19px">
<div class="t " style="left:1.8px;top:3.57px;font-size:13.5px;color:#000;">High</div>
</div>
<div class="clip" style="left:670px;top:583px;width:189px;height:19px">
<div class="t " style="left:1.8px;top:3.57px;font-size:13.5px;color:#000;">Artisan Arch Ring Binders</div>
</div>
<div class="clip" style="left:860px;top:583px;width:128px;height:19px">
<div class="t " style="left:1.8px;top:3.57px;font-size:13.5px;color:#000;">Office Supplies</div>
</div>
<div class="clip" style="left:989px;top:583px;width:132px;height:19px">
<div class="t " style="left:1.8px;top:3.57px;font-size:13.5px;color:#000;">Small Box</div>
</div>
<div class="clip" style="left:1122px;top:583px;width:86px;height:19px">
<div class="t " style="left:1.8px;top:3.57px;font-size:13.5px;color:#000;">Regular Air</div>
</div>
<div class="clip" style="left:1209px;top:583px;width:78px;height:19px">
<div class="t" style="right:2.5px;top:3.57px;font-size:13.5px;color:#000;letter-spacing:-0.45px">26-02-13</div>
</div>
<div class="clip" style="left:1288px;top:583px;width:57px;height:19px">
<div class="t " style="left:41.40000000000009px;top:3.57px;font-size:13.5px;color:#000;letter-spacing:-0.4px;">$3</div>
</div>
<div class="a" style="left:26px;top:622px;width:1319px;height:1px;background:#8eaadb"></div>
<div class="clip" style="left:26px;top:603px;width:72px;height:19px">
<div class="t " style="left:1.8px;top:3.57px;font-size:13.5px;color:#000;letter-spacing:-0.6px;">5036-1</div>
</div>
<div class="clip" style="left:99px;top:603px;width:92px;height:19px">
<div class="t" style="right:2.5px;top:3.57px;font-size:13.5px;color:#000;letter-spacing:-0.45px">07-03-13</div>
</div>
<div class="clip" style="left:192px;top:603px;width:81px;height:19px">
<div class="t " style="left:1.8px;top:3.57px;font-size:13.5px;color:#000;letter-spacing:-0.6px;">2013</div>
</div>
<div class="clip" style="left:274px;top:603px;width:62px;height:19px">
<div class="t " style="left:1.8px;top:3.57px;font-size:13.5px;color:#000;">VIC</div>
</div>
<div class="clip" style="left:337px;top:603px;width:105px;height:19px">
<div class="t " style="left:1.8px;top:3.57px;font-size:13.5px;color:#000;">Corporate</div>
</div>
<div class="clip" style="left:443px;top:603px;width:121px;height:19px">
<div class="t " style="left:1.8px;top:3.57px;font-size:13.5px;color:#000;">Yvette Biti</div>
</div>
<div class="clip" style="left:565px;top:603px;width:104px;height:19px">
<div class="t " style="left:1.8px;top:3.57px;font-size:13.5px;color:#000;">Critical</div>
</div>
<div class="clip" style="left:670px;top:603px;width:189px;height:19px">
<div class="t " style="left:1.8px;top:3.57px;font-size:13.5px;color:#000;">OIC Thumb-Tacks</div>
</div>
<div class="clip" style="left:860px;top:603px;width:128px;height:19px">
<div class="t " style="left:1.8px;top:3.57px;font-size:13.5px;color:#000;">Office Supplies</div>
</div>
<div class="clip" style="left:989px;top:603px;width:132px;height:19px">
<div class="t " style="left:1.8px;top:3.57px;font-size:13.5px;color:#000;">Wrap Bag</div>
</div>
<div class="clip" style="left:1122px;top:603px;width:86px;height:19px">
<div class="t " style="left:1.8px;top:3.57px;font-size:13.5px;color:#000;">Regular Air</div>
</div>
<div class="clip" style="left:1209px;top:603px;width:78px;height:19px">
<div class="t" style="right:2.5px;top:3.57px;font-size:13.5px;color:#000;letter-spacing:-0.45px">10-03-13</div>
</div>
<div class="clip" style="left:1288px;top:603px;width:57px;height:19px">
<div class="t " style="left:49.59999999999991px;top:3.57px;font-size:13.5px;color:#000;letter-spacing:-0.4px;">$</div>
</div>
<div class="a" style="left:26px;top:623px;width:1319px;height:19px;background:#d9e1f2"></div>
<div class="a" style="left:26px;top:642px;width:1319px;height:1px;background:#8eaadb"></div>
<div class="clip" style="left:26px;top:623px;width:72px;height:19px">
<div class="t " style="left:1.8px;top:3.57px;font-size:13.5px;color:#000;letter-spacing:-0.6px;">5037-1</div>
</div>
<div class="clip" style="left:99px;top:623px;width:92px;height:19px">
<div class="t" style="right:2.5px;top:3.57px;font-size:13.5px;color:#000;letter-spacing:-0.45px">11-03-13</div>
</div>
<div class="clip" style="left:192px;top:623px;width:81px;height:19px">
<div class="t " style="left:1.8px;top:3.57px;font-size:13.5px;color:#000;letter-spacing:-0.6px;">2013</div>
</div>
<div class="clip" style="left:274px;top:623px;width:62px;height:19px">
<div class="t " style="left:1.8px;top:3.57px;font-size:13.5px;color:#000;">NSW</div>
</div>
<div class="clip" style="left:337px;top:623px;width:105px;height:19px">
<div class="t " style="left:1.8px;top:3.57px;font-size:13.5px;color:#000;">Home Office</div>
</div>
<div class="clip" style="left:443px;top:623px;width:121px;height:19px">
<div class="t " style="left:1.8px;top:3.57px;font-size:13.5px;color:#000;">Stevie Bacata</div>
</div>
<div class="clip" style="left:565px;top:623px;width:104px;height:19px">
<div class="t " style="left:1.8px;top:3.57px;font-size:13.5px;color:#000;">Critical</div>
</div>
<div class="clip" style="left:670px;top:623px;width:189px;height:19px">
<div class="t " style="left:1.8px;top:3.57px;font-size:13.5px;color:#000;">Apex Elite Stainless Steel Scissors</div>
</div>
<div class="clip" style="left:860px;top:623px;width:128px;height:19px">
<div class="t " style="left:1.8px;top:3.57px;font-size:13.5px;color:#000;">Office Supplies</div>
</div>
<div class="clip" style="left:989px;top:623px;width:132px;height:19px">
<div class="t " style="left:1.8px;top:3.57px;font-size:13.5px;color:#000;">Small Pack</div>
</div>
<div class="clip" style="left:1122px;top:623px;width:86px;height:19px">
<div class="t " style="left:1.8px;top:3.57px;font-size:13.5px;color:#000;">Regular Air</div>
</div>
<div class="clip" style="left:1209px;top:623px;width:78px;height:19px">
<div class="t" style="right:2.5px;top:3.57px;font-size:13.5px;color:#000;letter-spacing:-0.45px">13-03-13</div>
</div>
<div class="clip" style="left:1288px;top:623px;width:57px;height:19px">
<div class="t " style="left:49.59999999999991px;top:3.57px;font-size:13.5px;color:#000;letter-spacing:-0.4px;">$</div>
</div>
<div class="a" style="left:26px;top:662px;width:1319px;height:1px;background:#8eaadb"></div>
<div class="clip" style="left:26px;top:643px;width:72px;height:19px">
<div class="t " style="left:1.8px;top:3.57px;font-size:13.5px;color:#000;letter-spacing:-0.6px;">5038-1</div>
</div>
<div class="clip" style="left:99px;top:643px;width:92px;height:19px">
<div class="t" style="right:2.5px;top:3.57px;font-size:13.5px;color:#000;letter-spacing:-0.45px">13-03-13</div>
</div>
<div class="clip" style="left:192px;top:643px;width:81px;height:19px">
<div class="t " style="left:1.8px;top:3.57px;font-size:13.5px;color:#000;letter-spacing:-0.6px;">2013</div>
</div>
<div class="clip" style="left:274px;top:643px;width:62px;height:19px">
<div class="t " style="left:1.8px;top:3.57px;font-size:13.5px;color:#000;">VIC</div>
</div>
<div class="clip" style="left:337px;top:643px;width:105px;height:19px">
<div class="t " style="left:1.8px;top:3.57px;font-size:13.5px;color:#000;">Corporate</div>
</div>
<div class="clip" style="left:443px;top:643px;width:121px;height:19px">
<div class="t " style="left:1.8px;top:3.57px;font-size:13.5px;color:#000;">Connor Betts</div>
</div>
<div class="clip" style="left:565px;top:643px;width:104px;height:19px">
<div class="t " style="left:1.8px;top:3.57px;font-size:13.5px;color:#000;">Low</div>
</div>
<div class="clip" style="left:670px;top:643px;width:189px;height:19px">
<div class="t " style="left:1.8px;top:3.57px;font-size:13.5px;color:#000;">OIC Thumb-Tacks</div>
</div>
<div class="clip" style="left:860px;top:643px;width:128px;height:19px">
<div class="t " style="left:1.8px;top:3.57px;font-size:13.5px;color:#000;">Office Supplies</div>
</div>
<div class="clip" style="left:989px;top:643px;width:132px;height:19px">
<div class="t " style="left:1.8px;top:3.57px;font-size:13.5px;color:#000;">Wrap Bag</div>
</div>
<div class="clip" style="left:1122px;top:643px;width:86px;height:19px">
<div class="t " style="left:1.8px;top:3.57px;font-size:13.5px;color:#000;">Regular Air</div>
</div>
<div class="clip" style="left:1209px;top:643px;width:78px;height:19px">
<div class="t" style="right:2.5px;top:3.57px;font-size:13.5px;color:#000;letter-spacing:-0.45px">13-03-13</div>
</div>
<div class="clip" style="left:1288px;top:643px;width:57px;height:19px">
<div class="t " style="left:49.59999999999991px;top:3.57px;font-size:13.5px;color:#000;letter-spacing:-0.4px;">$</div>
</div>
<div class="a" style="left:26px;top:663px;width:1319px;height:19px;background:#d9e1f2"></div>
<div class="a" style="left:26px;top:682px;width:1319px;height:1px;background:#8eaadb"></div>
<div class="clip" style="left:26px;top:663px;width:72px;height:19px">
<div class="t " style="left:1.8px;top:3.57px;font-size:13.5px;color:#000;letter-spacing:-0.6px;">5039-1</div>
</div>
<div class="clip" style="left:99px;top:663px;width:92px;height:19px">
<div class="t" style="right:2.5px;top:3.57px;font-size:13.5px;color:#000;letter-spacing:-0.45px">15-03-13</div>
</div>
<div class="clip" style="left:192px;top:663px;width:81px;height:19px">
<div class="t " style="left:1.8px;top:3.57px;font-size:13.5px;color:#000;letter-spacing:-0.6px;">2013</div>
</div>
<div class="clip" style="left:274px;top:663px;width:62px;height:19px">
<div class="t " style="left:1.8px;top:3.57px;font-size:13.5px;color:#000;">NSW</div>
</div>
<div class="clip" style="left:337px;top:663px;width:105px;height:19px">
<div class="t " style="left:1.8px;top:3.57px;font-size:13.5px;color:#000;">Corporate</div>
</div>
<div class="clip" style="left:443px;top:663px;width:121px;height:19px">
<div class="t " style="left:1.8px;top:3.57px;font-size:13.5px;color:#000;">Natasha Song</div>
</div>
<div class="clip" style="left:565px;top:663px;width:104px;height:19px">
<div class="t " style="left:1.8px;top:3.57px;font-size:13.5px;color:#000;">Medium</div>
</div>
<div class="clip" style="left:670px;top:663px;width:189px;height:19px">
<div class="t " style="left:1.8px;top:3.57px;font-size:13.5px;color:#000;">Alto Parchment Paper, Assorted</div>
</div>
<div class="clip" style="left:860px;top:663px;width:128px;height:19px">
<div class="t " style="left:1.8px;top:3.57px;font-size:13.5px;color:#000;">Office Supplies</div>
</div>
<div class="clip" style="left:989px;top:663px;width:132px;height:19px">
<div class="t " style="left:1.8px;top:3.57px;font-size:13.5px;color:#000;">Small Box</div>
</div>
<div class="clip" style="left:1122px;top:663px;width:86px;height:19px">
<div class="t " style="left:1.8px;top:3.57px;font-size:13.5px;color:#000;">Regular Air</div>
</div>
<div class="clip" style="left:1209px;top:663px;width:78px;height:19px">
<div class="t" style="right:2.5px;top:3.57px;font-size:13.5px;color:#000;letter-spacing:-0.45px">16-03-13</div>
</div>
<div class="clip" style="left:1288px;top:663px;width:57px;height:19px">
<div class="t " style="left:49.59999999999991px;top:3.57px;font-size:13.5px;color:#000;letter-spacing:-0.4px;">$</div>
</div>
</div>
<div class="a" style="left:191px;top:254px;width:1px;height:424px;background:#9c9c9c"></div>
<div class="a" style="left:0px;top:402px;width:1345px;height:1px;background:#9c9c9c"></div>
<div class="a" style="left:0px;top:678px;width:1345px;height:1px;background:#c8c8c8"></div>
<div class="a" style="left:1345px;top:250px;width:21px;height:428px;background:#f0f0f0"></div>
<div class="a" style="left:1347px;top:254px;width:17px;height:422px;background:#f6f6f6;border-radius:8px"></div>
<div class="a" style="left:1344px;top:273px;width:1px;height:405px;background:#b4b4b4"></div>
<svg class="a" style="left:1350px;top:258px;" width="10" height="8" viewBox="0 0 10 8"><path d="M0.5 7.5 L5 0.5 L9.5 7.5 Z" fill="#767676"/></svg>
<div class="a" style="left:1351px;top:272px;width:9px;height:18px;background:#767676;border-radius:4.5px"></div>
<svg class="a" style="left:1350px;top:668px;" width="10" height="8" viewBox="0 0 10 8"><path d="M0.5 0.5 H9.5 L5 7.5 Z" fill="#767676"/></svg>
<div class="a" style="left:0px;top:679px;width:1366px;height:27px;background:#f3f3f3"></div>
<svg class="a" style="left:26px;top:687px;" width="7" height="10" viewBox="0 0 7 10"><path d="M6 0.5 L1 5 L6 9.5 Z" fill="#c4c4c4"/></svg>
<svg class="a" style="left:54px;top:687px;" width="7" height="10" viewBox="0 0 7 10"><path d="M1 0.5 L6 5 L1 9.5 Z" fill="#c4c4c4"/></svg>
<div class="a" style="left:100px;top:682px;width:1px;height:20px;background:#c6c6c6"></div>
<div class="t " style="left:115px;top:685.42px;font-size:12.5px;color:#444;">Aanya Zhang</div>
<div class="a" style="left:205px;top:682px;width:1px;height:20px;background:#c6c6c6"></div>
<div class="t " style="left:220.5px;top:685.42px;font-size:12.5px;color:#444;">Charlie Bui</div>
<div class="a" style="left:296px;top:682px;width:1px;height:20px;background:#c6c6c6"></div>
<div class="t " style="left:310px;top:685.42px;font-size:12.5px;color:#444;">Connor Betts</div>
<div class="a" style="left:400px;top:682px;width:1px;height:20px;background:#c6c6c6"></div>
<div class="t " style="left:415.5px;top:685.42px;font-size:12.5px;color:#444;">Main Pivots</div>
<div class="a" style="left:497px;top:682px;width:1px;height:20px;background:#c6c6c6"></div>
<div class="a" style="left:497px;top:678px;width:66px;height:25px;background:#fff;border-left:1px solid #c6c6c6;border-right:1px solid #c6c6c6;box-sizing:border-box"></div>
<div class="a" style="left:497px;top:700px;width:66px;height:3px;background:#1e6e42"></div>
<div class="t " style="left:509.5px;top:685.55px;font-size:12.35px;color:#1e6e42;font-weight:700;">Orders</div>
<div class="t " style="left:575px;top:685.67px;font-size:12.2px;color:#444;">Sales Dash</div>
<div class="a" style="left:651px;top:682px;width:1px;height:20px;background:#c6c6c6"></div>
<svg class="a" style="left:685px;top:684px;" width="17" height="17" viewBox="0 0 17 17"><circle cx="8.5" cy="8.5" r="7.6" fill="none" stroke="#6a6a6a" stroke-width="1.1"/><path d="M8.5 4.5 V12.5 M4.5 8.5 H12.5" stroke="#6a6a6a" stroke-width="1.3"/></svg>
<div class="a" style="left:806px;top:679px;width:28px;height:26px;background:#ebebeb"></div>
<div class="a" style="left:819px;top:687px;width:2px;height:2px;background:#8a8a8a;border-radius:1px"></div>
<div class="a" style="left:819px;top:691px;width:2px;height:2px;background:#8a8a8a;border-radius:1px"></div>
<div class="a" style="left:819px;top:695px;width:2px;height:2px;background:#8a8a8a;border-radius:1px"></div>
<svg class="a" style="left:839px;top:688px;" width="7" height="10" viewBox="0 0 7 10"><path d="M6.5 0 L0.5 5 L6.5 10 Z" fill="#6a6a6a"/></svg>
<div class="a" style="left:851px;top:688px;width:248px;height:10px;background:#767676;border-radius:5px"></div>
<svg class="a" style="left:1333px;top:688px;" width="7" height="10" viewBox="0 0 7 10"><path d="M0.5 0 L6.5 5 L0.5 10 Z" fill="#6a6a6a"/></svg>
<div class="a" style="left:0px;top:706px;width:1366px;height:23px;background:#f3f3f3"></div>
<div class="a" style="left:0px;top:706px;width:1366px;height:1px;background:#fbfbfb"></div>
<div class="t " style="left:7.6px;top:713.74px;font-size:10.7px;color:#333;">Ready</div>
<div class="a" style="left:1066px;top:707px;width:40px;height:21px;background:#dadada"></div>
<svg class="a" style="left:1079px;top:710px;" width="13" height="13" viewBox="0 0 13 13"><g fill="#fff"><rect x="0" y="0" width="3.5" height="3.5"/><rect x="4.7" y="0" width="3.5" height="3.5"/><rect x="9.4" y="0" width="3.5" height="3.5"/><rect x="0" y="4.7" width="3.5" height="3.5"/><rect x="4.7" y="4.7" width="3.5" height="3.5"/><rect x="9.4" y="4.7" width="3.5" height="3.5"/><rect x="0" y="9.4" width="3.5" height="3.5"/><rect x="4.7" y="9.4" width="3.5" height="3.5"/><rect x="9.4" y="9.4" width="3.5" height="3.5"/></g></svg>
<svg class="a" style="left:1119px;top:710px;" width="14" height="13" viewBox="0 0 14 13"><rect x="0.5" y="0.5" width="13" height="12" fill="none" stroke="#fff" stroke-width="1.2"/><rect x="3" y="3" width="8" height="7" fill="none" stroke="#fff" stroke-width="1"/></svg>
<svg class="a" style="left:1159px;top:710px;" width="14" height="13" viewBox="0 0 14 13"><rect x="0.5" y="0.5" width="13" height="12" fill="none" stroke="#fff" stroke-width="1.2"/><rect x="2" y="1" width="5" height="6" fill="#fff"/></svg>
<div class="a" style="left:1192px;top:716px;width:8px;height:1px;background:#555"></div>
<div class="a" style="left:1205px;top:717px;width:100px;height:1px;background:#777"></div>
<div class="a" style="left:1253px;top:712px;width:5px;height:11px;background:#6a6a6a"></div>
<div class="a" style="left:1310px;top:716px;width:8px;height:1px;background:#555"></div>
<div class="a" style="left:1313.5px;top:712.5px;width:1px;height:8px;background:#555"></div>
<div class="t " style="left:1331.5px;top:713.20px;font-size:10.4px;color:#333;">100%</div>
<div class="a" style="left:0px;top:728px;width:47px;height:1px;background:#1a1a1a"></div>
<div class="a" style="left:47px;top:728px;width:345px;height:1px;background:#cfcfcf"></div>
<div class="a" style="left:392px;top:728px;width:974px;height:1px;background:#1a1a1a"></div>
<div class="t " style="left:601px;top:685.17px;font-size:26.5px;color:rgba(80,80,80,0.17);font-weight:700;">mostaql.com</div>
<svg class="a" style="left:598px;top:632px;" width="172" height="56" viewBox="0 0 172 56"><g fill="none" stroke="rgba(80,80,80,0.15)" stroke-width="5.5" stroke-linecap="round" stroke-linejoin="round">
<path d="M31 8 V40 Q31 48 23 48 H14 Q6 48 6 40 V31"/>
<path d="M31 48 H150"/>
<circle cx="57" cy="37" r="9"/>
<path d="M80 48 V36 M96 48 V36 M112 48 V38"/>
<circle cx="147" cy="37" r="11"/>
</g>
<g fill="rgba(80,80,80,0.15)"><circle cx="50" cy="10" r="3.5"/><circle cx="63" cy="10" r="3.5"/></g></svg>
</body></html>
